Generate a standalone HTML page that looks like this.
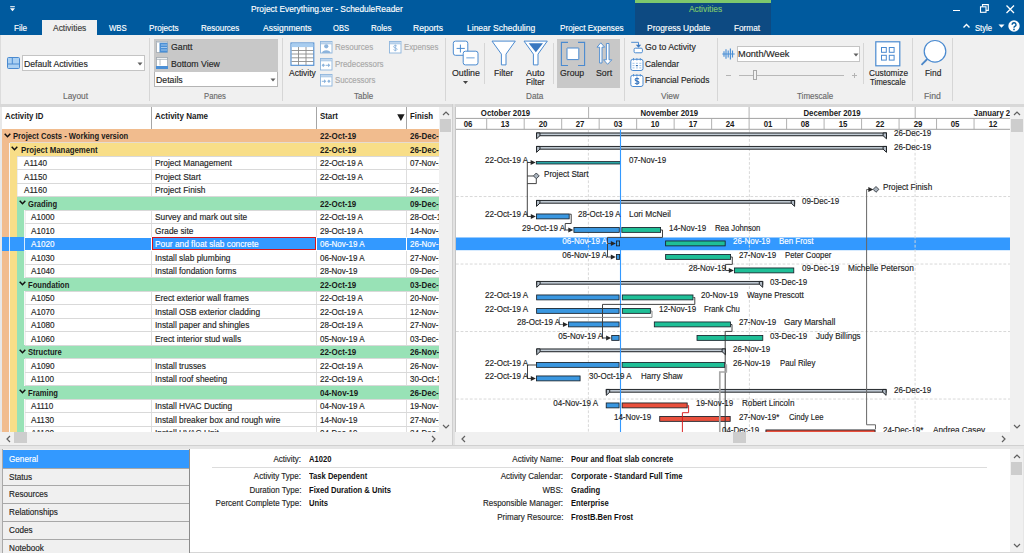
<!DOCTYPE html>
<html><head><meta charset="utf-8"><title>ScheduleReader</title>
<style>
html,body{margin:0;padding:0}
body{width:1024px;height:553px;position:relative;overflow:hidden;background:#f0f0f0;font-family:"Liberation Sans", sans-serif}
.r{position:absolute}
.t{position:absolute;white-space:nowrap;-webkit-text-stroke:0.15px currentColor}
svg.r{overflow:visible}
.t[style*="font-weight:bold"]{-webkit-text-stroke:0}
</style></head><body>
<div class="r" style="left:0.00px;top:0.00px;width:1024.00px;height:35.00px;background:#005a9e;"></div><div class="r" style="left:635.00px;top:0.00px;width:136.00px;height:35.00px;background:#0d4a82;"></div><div class="r" style="left:635.00px;top:0.00px;width:136.00px;height:3.00px;background:#7ec86c;"></div><div class="t" style="left:688.50px;top:5.38px;font-size:9px;line-height:9px;font-weight:normal;color:#7ec86c;transform:scaleX(0.9322);transform-origin:0 0;">Activities</div><div class="t" style="left:251.25px;top:4.98px;font-size:9px;line-height:9px;font-weight:normal;color:#ffffff;transform:scaleX(0.9305);transform-origin:0 0;">Project Everything.xer - ScheduleReader</div><svg class="r" style="left:10.00px;top:5.50px" width="5" height="6" viewBox="0 0 5 6"><rect x="0.2" y="0.2" width="4.6" height="1" fill="#fff"/><path d="M0 2.2h5l-2.5 3z" fill="#fff"/></svg><div class="r" style="left:952.50px;top:10.20px;width:7.50px;height:1.30px;background:#fff;"></div><svg class="r" style="left:979.00px;top:3.00px" width="11" height="11" viewBox="0 0 11 11"><rect x="1.5" y="3.8" width="5.5" height="5.5" fill="none" stroke="#fff" stroke-width="1.1"/><path d="M3.5 3.8V1.6h5.8v5.8H7" fill="none" stroke="#fff" stroke-width="1.1"/></svg><svg class="r" style="left:1005.00px;top:4.00px" width="11" height="11" viewBox="0 0 11 11"><path d="M1.5 1.5l7.5 7.5M9 1.5l-7.5 7.5" stroke="#fff" stroke-width="1.3"/></svg><div class="r" style="left:42.00px;top:20.00px;width:55.00px;height:15.30px;background:#f0f0f0;"></div><div class="t" style="left:13.75px;top:23.98px;font-size:9px;line-height:9px;font-weight:normal;color:#ffffff;transform:scaleX(0.9068);transform-origin:0 0;">File</div><div class="t" style="left:53.40px;top:23.98px;font-size:9px;line-height:9px;font-weight:normal;color:#3a3a3a;transform:scaleX(0.9378);transform-origin:0 0;">Activities</div><div class="t" style="left:108.90px;top:23.98px;font-size:9px;line-height:9px;font-weight:normal;color:#ffffff;transform:scaleX(0.8634);transform-origin:0 0;">WBS</div><div class="t" style="left:148.75px;top:23.98px;font-size:9px;line-height:9px;font-weight:normal;color:#ffffff;transform:scaleX(0.9074);transform-origin:0 0;">Projects</div><div class="t" style="left:201.25px;top:23.98px;font-size:9px;line-height:9px;font-weight:normal;color:#ffffff;transform:scaleX(0.8892);transform-origin:0 0;">Resources</div><div class="t" style="left:262.50px;top:23.98px;font-size:9px;line-height:9px;font-weight:normal;color:#ffffff;transform:scaleX(0.9414);transform-origin:0 0;">Assignments</div><div class="t" style="left:333.00px;top:23.98px;font-size:9px;line-height:9px;font-weight:normal;color:#ffffff;transform:scaleX(0.8418);transform-origin:0 0;">OBS</div><div class="t" style="left:370.50px;top:23.98px;font-size:9px;line-height:9px;font-weight:normal;color:#ffffff;transform:scaleX(0.8909);transform-origin:0 0;">Roles</div><div class="t" style="left:413.00px;top:23.98px;font-size:9px;line-height:9px;font-weight:normal;color:#ffffff;transform:scaleX(0.9520);transform-origin:0 0;">Reports</div><div class="t" style="left:466.70px;top:23.98px;font-size:9px;line-height:9px;font-weight:normal;color:#ffffff;transform:scaleX(0.9465);transform-origin:0 0;">Linear Scheduling</div><div class="t" style="left:559.50px;top:23.98px;font-size:9px;line-height:9px;font-weight:normal;color:#ffffff;transform:scaleX(0.9067);transform-origin:0 0;">Project Expenses</div><div class="t" style="left:647.20px;top:23.98px;font-size:9px;line-height:9px;font-weight:normal;color:#ffffff;transform:scaleX(0.9373);transform-origin:0 0;">Progress Update</div><div class="t" style="left:733.90px;top:23.98px;font-size:9px;line-height:9px;font-weight:normal;color:#ffffff;transform:scaleX(0.9157);transform-origin:0 0;">Format</div><svg class="r" style="left:962.00px;top:22.00px" width="9" height="8" viewBox="0 0 9 8"><path d="M1.5 5.5l3-3 3 3" fill="none" stroke="#fff" stroke-width="1.4"/></svg><div class="t" style="left:974.70px;top:23.68px;font-size:9px;line-height:9px;font-weight:normal;color:#fff;transform:scaleX(0.8496);transform-origin:0 0;">Style</div><svg class="r" style="left:998.00px;top:23.50px" width="7" height="5" viewBox="0 0 7 5"><path d="M0.5 0.5h6l-3 3.2z" fill="#fff"/></svg><svg class="r" style="left:1008.00px;top:20.30px" width="12" height="12" viewBox="0 0 12 12"><circle cx="6" cy="6" r="5.7" fill="#fff"/><path d="M4.1 4.7a1.95 1.95 0 1 1 2.7 1.75c-.6.3-.8.6-.8 1.3" fill="none" stroke="#005a9e" stroke-width="1.4"/><circle cx="6" cy="9.4" r=".85" fill="#005a9e"/></svg><div class="r" style="left:0.00px;top:35.00px;width:1024.00px;height:69.00px;background:#f0f0f0;"></div><div class="r" style="left:0.00px;top:35.00px;width:1.00px;height:69.00px;background:#dcdcdc;"></div><div class="r" style="left:148.60px;top:37.50px;width:0.90px;height:63.50px;background:#d6d6d6;"></div><div class="r" style="left:281.50px;top:37.50px;width:0.90px;height:63.50px;background:#d6d6d6;"></div><div class="r" style="left:444.80px;top:37.50px;width:0.90px;height:63.50px;background:#d6d6d6;"></div><div class="r" style="left:623.50px;top:37.50px;width:0.90px;height:63.50px;background:#d6d6d6;"></div><div class="r" style="left:716.50px;top:37.50px;width:0.90px;height:63.50px;background:#d6d6d6;"></div><div class="r" style="left:912.40px;top:37.50px;width:0.90px;height:63.50px;background:#d6d6d6;"></div><div class="r" style="left:951.60px;top:37.50px;width:0.90px;height:63.50px;background:#d6d6d6;"></div><div class="r" style="left:483.60px;top:43.00px;width:0.90px;height:41.00px;background:#d6d6d6;"></div><div class="r" style="left:552.60px;top:43.00px;width:0.90px;height:41.00px;background:#d6d6d6;"></div><div class="r" style="left:862.50px;top:43.00px;width:0.90px;height:41.00px;background:#d6d6d6;"></div><div class="t" style="left:62.50px;top:91.58px;font-size:9px;line-height:9px;font-weight:normal;color:#6a6a6a;transform:scaleX(0.9252);transform-origin:0 0;">Layout</div><div class="t" style="left:204.20px;top:91.58px;font-size:9px;line-height:9px;font-weight:normal;color:#6a6a6a;transform:scaleX(0.8543);transform-origin:0 0;">Panes</div><div class="t" style="left:353.90px;top:91.58px;font-size:9px;line-height:9px;font-weight:normal;color:#6a6a6a;transform:scaleX(0.8877);transform-origin:0 0;">Table</div><div class="t" style="left:525.70px;top:91.58px;font-size:9px;line-height:9px;font-weight:normal;color:#6a6a6a;transform:scaleX(0.9100);transform-origin:0 0;">Data</div><div class="t" style="left:661.00px;top:91.58px;font-size:9px;line-height:9px;font-weight:normal;color:#6a6a6a;transform:scaleX(0.9305);transform-origin:0 0;">View</div><div class="t" style="left:796.60px;top:91.58px;font-size:9px;line-height:9px;font-weight:normal;color:#6a6a6a;transform:scaleX(0.8900);transform-origin:0 0;">Timescale</div><div class="t" style="left:924.30px;top:91.58px;font-size:9px;line-height:9px;font-weight:normal;color:#6a6a6a;transform:scaleX(0.9653);transform-origin:0 0;">Find</div><svg class="r" style="left:7.00px;top:57.00px" width="13" height="12" viewBox="0 0 13 12"><rect x="0.5" y="0.5" width="12" height="11" rx="1" fill="#abd0f2" stroke="#4a8ad0"/><path d="M5.3 0.5v6.5M0.5 7h12" stroke="#4a8ad0"/></svg><div class="r" style="left:22.20px;top:55.30px;width:123.30px;height:15.50px;background:#fff;box-sizing:border-box;border:1px solid #c4c4c4"></div><div class="t" style="left:23.75px;top:60.18px;font-size:9px;line-height:9px;font-weight:normal;color:#262626;transform:scaleX(0.9655);transform-origin:0 0;">Default Activities</div><svg class="r" style="left:137.00px;top:62.00px" width="6" height="4" viewBox="0 0 6 4"><path d="M0.5 0.5h5l-2.5 3z" fill="#606060"/></svg><div class="r" style="left:154.20px;top:39.00px;width:123.90px;height:33.20px;background:#c8c8c8;"></div><div class="r" style="left:154.20px;top:72.20px;width:123.90px;height:15.30px;background:#fff;box-sizing:border-box;border:1px solid #b4b4b4;border-top:none"></div><svg class="r" style="left:156.00px;top:41.00px" width="12" height="12" viewBox="0 0 12 12"><rect x="0.5" y="0.5" width="11" height="11" fill="#fff" stroke="#a0a8b0" stroke-width="0.8"/><rect x="3.5" y="1.5" width="8" height="10" fill="#4a8fd6"/><path d="M5 4h6M5 6.5h6M5 9h6" stroke="#b8d6f4" stroke-width="0.8"/><rect x="0.5" y="0.5" width="11" height="1.2" fill="#c0cad4"/></svg><div class="t" style="left:170.50px;top:43.08px;font-size:9px;line-height:9px;font-weight:normal;color:#262626;transform:scaleX(0.9767);transform-origin:0 0;">Gantt</div><svg class="r" style="left:156.00px;top:57.40px" width="12" height="12" viewBox="0 0 12 12"><rect x="0.5" y="0.5" width="11" height="11" fill="#fff" stroke="#a0a8b0" stroke-width="0.8"/><path d="M0.5 2.3h11M4 2.3v6" stroke="#a0a8b0" stroke-width="0.8"/><rect x="0" y="9" width="12" height="3" fill="#4a8fd6"/></svg><div class="t" style="left:170.50px;top:59.78px;font-size:9px;line-height:9px;font-weight:normal;color:#262626;transform:scaleX(0.9691);transform-origin:0 0;">Bottom View</div><div class="t" style="left:156.30px;top:76.08px;font-size:9px;line-height:9px;font-weight:normal;color:#262626;transform:scaleX(0.9706);transform-origin:0 0;">Details</div><svg class="r" style="left:270.00px;top:78.00px" width="6" height="4" viewBox="0 0 6 4"><path d="M0.5 0.5h5l-2.5 3z" fill="#606060"/></svg><svg class="r" style="left:289.50px;top:41.50px" width="25" height="24" viewBox="0 0 25 24"><rect x="1" y="1" width="22.8" height="22.3" fill="#fff" stroke="#4a8ad0" stroke-width="1.1"/><rect x="1.5" y="1.5" width="21.8" height="3.6" fill="#a8cdf0"/><path d="M1.5 8.5h22M1.5 12h22M1.5 15.8h22M1.5 19.5h22M8.5 5v18M16 5v18" stroke="#8c8c8c" stroke-width="0.9"/></svg><div class="t" style="left:288.60px;top:68.68px;font-size:9px;line-height:9px;font-weight:normal;color:#262626;transform:scaleX(0.9403);transform-origin:0 0;">Activity</div><svg class="r" style="left:319.70px;top:41.00px" width="13" height="13" viewBox="0 0 13 13"><rect x="0.5" y="0.5" width="11.5" height="11.5" fill="#fff" stroke="#8db4dc" stroke-width="0.9"/><rect x="1" y="1" width="10.5" height="1.8" fill="#c0d6ee"/><path d="M0.5 2.9h11.5" stroke="#8db4dc" stroke-width="0.6"/><circle cx="6.25" cy="5.3" r="2.1" fill="#8db4dc"/><path d="M2 12c0-3.6 8.5-3.6 8.5 0z" fill="#8db4dc"/></svg><div class="t" style="left:334.80px;top:43.48px;font-size:9px;line-height:9px;font-weight:normal;color:#a8a8a8;transform:scaleX(0.8880);transform-origin:0 0;">Resources</div><svg class="r" style="left:319.70px;top:57.50px" width="13" height="13" viewBox="0 0 13 13"><rect x="0.5" y="0.5" width="11.5" height="11.5" fill="#fff" stroke="#8db4dc" stroke-width="0.9"/><rect x="1" y="1" width="10.5" height="1.8" fill="#c0d6ee"/><path d="M0.5 2.9h11.5" stroke="#8db4dc" stroke-width="0.6"/><path d="M3.3 5.6l1.7 1.7-1.7 1.7-1.7-1.7z" fill="#8db4dc"/><path d="M5.6 7.3h3" stroke="#8db4dc" stroke-width="1"/><path d="M8 5.3l2.4 2-2.4 2z" fill="#8db4dc"/></svg><div class="t" style="left:334.80px;top:59.88px;font-size:9px;line-height:9px;font-weight:normal;color:#a8a8a8;transform:scaleX(0.8814);transform-origin:0 0;">Predecessors</div><svg class="r" style="left:319.70px;top:73.70px" width="13" height="13" viewBox="0 0 13 13"><rect x="0.5" y="0.5" width="11.5" height="11.5" fill="#fff" stroke="#8db4dc" stroke-width="0.9"/><rect x="1" y="1" width="10.5" height="1.8" fill="#c0d6ee"/><path d="M0.5 2.9h11.5" stroke="#8db4dc" stroke-width="0.6"/><path d="M1.8 7.3h2.6" stroke="#8db4dc" stroke-width="1"/><path d="M4 5.3l2.4 2-2.4 2z" fill="#8db4dc"/><path d="M8.9 5.6l1.7 1.7-1.7 1.7-1.7-1.7z" fill="#8db4dc"/></svg><div class="t" style="left:334.80px;top:76.18px;font-size:9px;line-height:9px;font-weight:normal;color:#a8a8a8;transform:scaleX(0.8664);transform-origin:0 0;">Successors</div><svg class="r" style="left:388.50px;top:41.00px" width="13" height="13" viewBox="0 0 13 13"><rect x="0.5" y="0.5" width="11.5" height="11.5" fill="#fff" stroke="#8db4dc" stroke-width="0.9"/><rect x="1" y="1" width="10.5" height="1.8" fill="#c0d6ee"/><path d="M0.5 2.9h11.5" stroke="#8db4dc" stroke-width="0.6"/><path d="M8 5.3c-.3-.5-.9-.8-1.7-.8-1 0-1.7.5-1.7 1.2 0 1.6 3.5.9 3.5 2.5 0 .7-.7 1.2-1.8 1.2-.8 0-1.4-.3-1.8-.8M6.3 3.5v6.8" fill="none" stroke="#8db4dc" stroke-width="0.9"/></svg><div class="t" style="left:403.70px;top:43.48px;font-size:9px;line-height:9px;font-weight:normal;color:#a8a8a8;transform:scaleX(0.8678);transform-origin:0 0;">Expenses</div><svg class="r" style="left:452.00px;top:40.00px" width="28" height="26" viewBox="0 0 28 26"><rect x="1.3" y="1.1" width="14.5" height="14.2" rx="2.2" fill="#fff" stroke="#4a8ad0" stroke-width="1"/><path d="M4.6 8.4h8.2M8.4 4.6v7.9" stroke="#4a8ad0" stroke-width="1"/><rect x="11.2" y="11.2" width="14.8" height="13.7" rx="2.2" fill="#fff" stroke="#4a8ad0" stroke-width="1"/><path d="M14.3 17.8h8.3" stroke="#9cc0e6" stroke-width="1.5"/></svg><div class="t" style="left:452.00px;top:68.93px;font-size:9px;line-height:9px;font-weight:normal;color:#262626;transform:scaleX(0.9784);transform-origin:0 0;">Outline</div><svg class="r" style="left:462.50px;top:80.50px" width="5" height="3" viewBox="0 0 5 3"><path d="M0 0h5l-2.5 3z" fill="#444"/></svg><svg class="r" style="left:491.00px;top:40.00px" width="26" height="26" viewBox="0 0 26 26"><path d="M1 1.1h23.3l-9.3 13v10.8h-4.6V14.1z" fill="#fff" stroke="#4a8ad0" stroke-width="1" stroke-linejoin="miter"/></svg><div class="t" style="left:494.20px;top:68.93px;font-size:9px;line-height:9px;font-weight:normal;color:#262626;transform:scaleX(0.9550);transform-origin:0 0;">Filter</div><svg class="r" style="left:522.50px;top:40.00px" width="26" height="26" viewBox="0 0 26 26"><path d="M1 1.1h23.3l-9.3 13v10.8h-4.6V14.1z" fill="#fff" stroke="#4a8ad0" stroke-width="1"/><path d="M5.7 3.3h14.3l-7.15 9z" fill="#3a78c0"/></svg><div class="t" style="left:525.70px;top:68.93px;font-size:9px;line-height:9px;font-weight:normal;color:#262626;transform:scaleX(1.0046);transform-origin:0 0;">Auto</div><div class="t" style="left:525.70px;top:78.38px;font-size:9px;line-height:9px;font-weight:normal;color:#262626;transform:scaleX(0.9300);transform-origin:0 0;">Filter</div><div class="r" style="left:557.00px;top:38.90px;width:63.00px;height:48.90px;background:#c8c8c8;"></div><svg class="r" style="left:560.00px;top:40.50px" width="26" height="26" viewBox="0 0 26 26"><path d="M8 1.4H1.4v23.1H8M18 1.4h6.6v23.1H18" fill="none" stroke="#4a8ad0" stroke-width="1.1"/><rect x="7" y="7" width="11.8" height="11.6" rx="0.3" fill="#fff" stroke="#4a8ad0" stroke-width="1"/></svg><div class="t" style="left:560.20px;top:68.93px;font-size:9px;line-height:9px;font-weight:normal;color:#262626;transform:scaleX(0.9675);transform-origin:0 0;">Group</div><svg class="r" style="left:596.00px;top:41.50px" width="17" height="24" viewBox="0 0 17 24"><path d="M4.8 0.8L1 5.2h2.6v15.8h2.4V5.2h2.6z" fill="#fff" stroke="#4a8ad0" stroke-width="0.9"/><path d="M11.6 22.3l4.2-4.5h-2.8V1.5h-2.6v16.3H7.6z" fill="#fff" stroke="#4a8ad0" stroke-width="0.9"/></svg><div class="t" style="left:595.50px;top:68.93px;font-size:9px;line-height:9px;font-weight:normal;color:#262626;transform:scaleX(0.9754);transform-origin:0 0;">Sort</div><svg class="r" style="left:630.00px;top:41.00px" width="14" height="13" viewBox="0 0 14 13"><path d="M1.2 1.3h7.3v3.5" fill="none" stroke="#4a8ad0" stroke-width="1"/><path d="M5.8 3.8h5.4l-2.7 2.9z" fill="#3a78c0"/><rect x="4.1" y="7.2" width="8.3" height="4.6" rx="1.2" fill="#fff" stroke="#4a8ad0" stroke-width="1"/></svg><div class="t" style="left:645.00px;top:43.08px;font-size:9px;line-height:9px;font-weight:normal;color:#262626;transform:scaleX(0.9673);transform-origin:0 0;">Go to Activity</div><svg class="r" style="left:629.70px;top:57.50px" width="14" height="13" viewBox="0 0 14 13"><rect x="0.8" y="1.3" width="12.2" height="11.2" rx="2" fill="#fff" stroke="#4a8ad0" stroke-width="1"/><path d="M3.5 0v2.5M6.9 0v2.5M10.3 0v2.5" stroke="#4a8ad0" stroke-width="0.8"/><path d="M2.5 5.3h2M5.9 5.3h2M9.3 5.3h2M2.5 7.6h2M9.3 7.6h2M2.5 9.9h2M5.9 9.9h2M9.3 9.9h2" stroke="#9cc4ea" stroke-width="1"/><rect x="5.9" y="7.1" width="2" height="1.1" fill="#1f5ea8"/></svg><div class="t" style="left:645.00px;top:59.98px;font-size:9px;line-height:9px;font-weight:normal;color:#262626;transform:scaleX(0.9309);transform-origin:0 0;">Calendar</div><svg class="r" style="left:629.70px;top:74.00px" width="14" height="13" viewBox="0 0 14 13"><rect x="0.8" y="1.3" width="12.2" height="11.2" rx="2" fill="#fff" stroke="#4a8ad0" stroke-width="1"/><path d="M3.5 0v2.5M6.9 0v2.5M10.3 0v2.5" stroke="#4a8ad0" stroke-width="0.8"/><path d="M8.9 5.2c-.3-.6-1-.9-1.9-.9-1.1 0-1.9.6-1.9 1.4 0 1.8 3.9 1 3.9 2.8 0 .8-.8 1.4-2 1.4-.9 0-1.6-.3-2-.9M7 3.3v7.6" fill="none" stroke="#3a78c0" stroke-width="1.1"/></svg><div class="t" style="left:645.00px;top:76.38px;font-size:9px;line-height:9px;font-weight:normal;color:#262626;transform:scaleX(0.9329);transform-origin:0 0;">Financial Periods</div><svg class="r" style="left:722.00px;top:47.50px" width="13" height="12" viewBox="0 0 13 12"><path d="M0.3 6h12.4M2 3.2v5.6M4 1.2v9.6M6.2 2.4v7.2M8.4 0.4v11.2M10.5 2.6v6.8" stroke="#4a8fd6" stroke-width="1.15"/></svg><div class="r" style="left:737.20px;top:46.00px;width:123.20px;height:15.80px;background:#fff;box-sizing:border-box;border:1px solid #c4c4c4"></div><div class="t" style="left:738.40px;top:50.18px;font-size:9px;line-height:9px;font-weight:normal;color:#262626;transform:scaleX(1.0207);transform-origin:0 0;">Month/Week</div><svg class="r" style="left:852.50px;top:52.50px" width="6" height="4" viewBox="0 0 6 4"><path d="M0.5 0.5h5l-2.5 3z" fill="#606060"/></svg><div class="r" style="left:725.50px;top:75.10px;width:5.50px;height:0.90px;background:#b4b4b4;"></div><div class="r" style="left:738.70px;top:75.00px;width:105.30px;height:0.90px;background:#b8b8b8;"></div><div class="r" style="left:752.50px;top:70.20px;width:4.20px;height:9.40px;background:#f2f2f2;box-sizing:border-box;border:1px solid #a8a8a8"></div><div class="r" style="left:851.60px;top:75.30px;width:5.20px;height:0.90px;background:#b4b4b4;"></div><div class="r" style="left:853.75px;top:73.15px;width:0.90px;height:5.20px;background:#b4b4b4;"></div><svg class="r" style="left:874.50px;top:40.50px" width="26" height="26" viewBox="0 0 26 26"><rect x="0.8" y="0.8" width="24" height="24" fill="#fff" stroke="#4a8ad0" stroke-width="1.2"/><rect x="6.5" y="6.5" width="4.8" height="4.8" fill="none" stroke="#4a8ad0" stroke-width="1"/><rect x="14.3" y="6.5" width="4.8" height="4.8" fill="none" stroke="#4a8ad0" stroke-width="1"/><rect x="6.5" y="14.3" width="4.8" height="4.8" fill="none" stroke="#4a8ad0" stroke-width="1"/><rect x="14.3" y="14.3" width="4.8" height="4.8" fill="none" stroke="#4a8ad0" stroke-width="1"/></svg><div class="t" style="left:868.50px;top:68.88px;font-size:9px;line-height:9px;font-weight:normal;color:#262626;transform:scaleX(0.9197);transform-origin:0 0;">Customize</div><div class="t" style="left:870.00px;top:78.38px;font-size:9px;line-height:9px;font-weight:normal;color:#262626;transform:scaleX(0.8752);transform-origin:0 0;">Timescale</div><svg class="r" style="left:919.50px;top:38.50px" width="28" height="28" viewBox="0 0 28 28"><circle cx="15" cy="12.3" r="10.8" fill="#fff" stroke="#4a8ad0" stroke-width="1.2"/><path d="M7.3 20L1.5 25.8" stroke="#4a86c8" stroke-width="1.8"/></svg><div class="t" style="left:924.90px;top:68.88px;font-size:9px;line-height:9px;font-weight:normal;color:#262626;transform:scaleX(0.9310);transform-origin:0 0;">Find</div><div class="r" style="left:0.00px;top:103.60px;width:1024.00px;height:3.20px;background:#d8d8d8;"></div><div class="r" style="left:0px;top:106.8px;width:439px;height:325.2px;background:#fff;overflow:hidden"><div class="r" style="left:0.00px;top:0.00px;width:2.20px;height:326.00px;background:#e8e8e8;"></div><div class="r" style="left:2.20px;top:0.00px;width:437.00px;height:22.20px;background:#fff;"></div><div class="r" style="left:2.20px;top:21.90px;width:437.00px;height:1.00px;background:#8e8e8e;"></div><div class="r" style="left:151.10px;top:0.00px;width:0.90px;height:22.00px;background:#a6a6a6;"></div><div class="r" style="left:316.20px;top:0.00px;width:0.90px;height:22.00px;background:#a6a6a6;"></div><div class="r" style="left:406.20px;top:0.00px;width:0.90px;height:22.00px;background:#a6a6a6;"></div><div class="t" style="left:5.30px;top:5.28px;font-size:9px;line-height:9px;font-weight:bold;color:#1a1a1a;transform:scaleX(0.8725);transform-origin:0 0;">Activity ID</div><div class="t" style="left:155.30px;top:5.28px;font-size:9px;line-height:9px;font-weight:bold;color:#1a1a1a;transform:scaleX(0.8904);transform-origin:0 0;">Activity Name</div><div class="t" style="left:320.30px;top:5.28px;font-size:9px;line-height:9px;font-weight:bold;color:#1a1a1a;transform:scaleX(0.8700);transform-origin:0 0;">Start</div><div class="t" style="left:410.20px;top:5.28px;font-size:9px;line-height:9px;font-weight:bold;color:#1a1a1a;transform:scaleX(0.8700);transform-origin:0 0;">Finish</div><svg class="r" style="left:396.80px;top:6.80px" width="8" height="7" viewBox="0 0 8 7"><path d="M0.2 0.3h7.4l-3.7 6.6z" fill="#1a1a1a"/></svg><div class="r" style="left:2.20px;top:22.50px;width:436.80px;height:13.50px;background:#f1bc8e;"></div><svg class="r" style="left:3.60px;top:25.90px" width="7" height="5" viewBox="0 0 7 5"><path d="M0.7 0.8l2.8 2.9 2.8-2.9" fill="none" stroke="#111" stroke-width="1.5"/></svg><div class="t" style="left:13.40px;top:25.28px;font-size:9px;line-height:9px;font-weight:bold;color:#1a1a1a;transform:scaleX(0.8450);transform-origin:0 0;">Project Costs - Working version</div><div class="t" style="left:320.30px;top:25.28px;font-size:9px;line-height:9px;font-weight:bold;color:#1a1a1a;transform:scaleX(0.8850);transform-origin:0 0;">22-Oct-19</div><div class="t" style="left:410.30px;top:25.28px;font-size:9px;line-height:9px;font-weight:bold;color:#1a1a1a;transform:scaleX(0.8850);transform-origin:0 0;">26-Dec-19</div><div class="r" style="left:2.20px;top:36.00px;width:6.90px;height:13.50px;background:#f1bc8e;"></div><div class="r" style="left:9.05px;top:36.00px;width:0.60px;height:13.50px;background:#f6f6f6;"></div><div class="r" style="left:9.65px;top:36.00px;width:429.35px;height:13.50px;background:#f8de88;"></div><svg class="r" style="left:11.05px;top:39.40px" width="7" height="5" viewBox="0 0 7 5"><path d="M0.7 0.8l2.8 2.9 2.8-2.9" fill="none" stroke="#111" stroke-width="1.5"/></svg><div class="t" style="left:20.75px;top:38.78px;font-size:9px;line-height:9px;font-weight:bold;color:#1a1a1a;transform:scaleX(0.8700);transform-origin:0 0;">Project Management</div><div class="t" style="left:320.30px;top:38.78px;font-size:9px;line-height:9px;font-weight:bold;color:#1a1a1a;transform:scaleX(0.8850);transform-origin:0 0;">22-Oct-19</div><div class="t" style="left:410.30px;top:38.78px;font-size:9px;line-height:9px;font-weight:bold;color:#1a1a1a;transform:scaleX(0.8850);transform-origin:0 0;">26-Dec-19</div><div class="r" style="left:2.20px;top:49.50px;width:6.90px;height:13.50px;background:#f1bc8e;"></div><div class="r" style="left:9.05px;top:49.50px;width:0.60px;height:13.50px;background:#f6f6f6;"></div><div class="r" style="left:9.65px;top:49.50px;width:6.90px;height:13.50px;background:#f8de88;"></div><div class="r" style="left:16.50px;top:49.50px;width:0.60px;height:13.50px;background:#f6f6f6;"></div><div class="r" style="left:17.10px;top:49.50px;width:421.90px;height:13.50px;background:#fff;"></div><div class="r" style="left:17.10px;top:49.50px;width:0.60px;height:13.50px;background:#eeeeee;"></div><div class="r" style="left:151.10px;top:49.50px;width:0.90px;height:13.50px;background:#dedede;"></div><div class="r" style="left:316.20px;top:49.50px;width:0.90px;height:13.50px;background:#dedede;"></div><div class="r" style="left:406.20px;top:49.50px;width:0.90px;height:13.50px;background:#dedede;"></div><div class="t" style="left:24.20px;top:52.28px;font-size:9px;line-height:9px;font-weight:normal;color:#1e1e1e;transform:scaleX(0.9050);transform-origin:0 0;">A1140</div><div class="t" style="left:155.20px;top:52.28px;font-size:9px;line-height:9px;font-weight:normal;color:#1e1e1e;transform:scaleX(0.9250);transform-origin:0 0;">Project Management</div><div class="t" style="left:320.30px;top:52.28px;font-size:9px;line-height:9px;font-weight:normal;color:#1e1e1e;transform:scaleX(0.8900);transform-origin:0 0;">22-Oct-19 A</div><div class="t" style="left:410.30px;top:52.28px;font-size:9px;line-height:9px;font-weight:normal;color:#1e1e1e;transform:scaleX(0.8900);transform-origin:0 0;">07-Nov-19</div><div class="r" style="left:2.20px;top:63.00px;width:6.90px;height:13.50px;background:#f1bc8e;"></div><div class="r" style="left:9.05px;top:63.00px;width:0.60px;height:13.50px;background:#f6f6f6;"></div><div class="r" style="left:9.65px;top:63.00px;width:6.90px;height:13.50px;background:#f8de88;"></div><div class="r" style="left:16.50px;top:63.00px;width:0.60px;height:13.50px;background:#f6f6f6;"></div><div class="r" style="left:17.10px;top:63.00px;width:421.90px;height:13.50px;background:#fff;"></div><div class="r" style="left:17.10px;top:63.00px;width:0.60px;height:13.50px;background:#eeeeee;"></div><div class="r" style="left:151.10px;top:63.00px;width:0.90px;height:13.50px;background:#dedede;"></div><div class="r" style="left:316.20px;top:63.00px;width:0.90px;height:13.50px;background:#dedede;"></div><div class="r" style="left:406.20px;top:63.00px;width:0.90px;height:13.50px;background:#dedede;"></div><div class="t" style="left:24.20px;top:65.78px;font-size:9px;line-height:9px;font-weight:normal;color:#1e1e1e;transform:scaleX(0.9050);transform-origin:0 0;">A1150</div><div class="t" style="left:155.20px;top:65.78px;font-size:9px;line-height:9px;font-weight:normal;color:#1e1e1e;transform:scaleX(0.9250);transform-origin:0 0;">Project Start</div><div class="t" style="left:320.30px;top:65.78px;font-size:9px;line-height:9px;font-weight:normal;color:#1e1e1e;transform:scaleX(0.8900);transform-origin:0 0;">22-Oct-19 A</div><div class="t" style="left:410.30px;top:65.78px;font-size:9px;line-height:9px;font-weight:normal;color:#1e1e1e;transform:scaleX(0.8900);transform-origin:0 0;"></div><div class="r" style="left:2.20px;top:76.50px;width:6.90px;height:13.50px;background:#f1bc8e;"></div><div class="r" style="left:9.05px;top:76.50px;width:0.60px;height:13.50px;background:#f6f6f6;"></div><div class="r" style="left:9.65px;top:76.50px;width:6.90px;height:13.50px;background:#f8de88;"></div><div class="r" style="left:16.50px;top:76.50px;width:0.60px;height:13.50px;background:#f6f6f6;"></div><div class="r" style="left:17.10px;top:76.50px;width:421.90px;height:13.50px;background:#fff;"></div><div class="r" style="left:17.10px;top:76.50px;width:0.60px;height:13.50px;background:#eeeeee;"></div><div class="r" style="left:151.10px;top:76.50px;width:0.90px;height:13.50px;background:#dedede;"></div><div class="r" style="left:316.20px;top:76.50px;width:0.90px;height:13.50px;background:#dedede;"></div><div class="r" style="left:406.20px;top:76.50px;width:0.90px;height:13.50px;background:#dedede;"></div><div class="t" style="left:24.20px;top:79.28px;font-size:9px;line-height:9px;font-weight:normal;color:#1e1e1e;transform:scaleX(0.9050);transform-origin:0 0;">A1160</div><div class="t" style="left:155.20px;top:79.28px;font-size:9px;line-height:9px;font-weight:normal;color:#1e1e1e;transform:scaleX(0.9250);transform-origin:0 0;">Project Finish</div><div class="t" style="left:320.30px;top:79.28px;font-size:9px;line-height:9px;font-weight:normal;color:#1e1e1e;transform:scaleX(0.8900);transform-origin:0 0;"></div><div class="t" style="left:410.30px;top:79.28px;font-size:9px;line-height:9px;font-weight:normal;color:#1e1e1e;transform:scaleX(0.8900);transform-origin:0 0;">24-Dec-19</div><div class="r" style="left:2.20px;top:90.00px;width:6.90px;height:13.50px;background:#f1bc8e;"></div><div class="r" style="left:9.05px;top:90.00px;width:0.60px;height:13.50px;background:#f6f6f6;"></div><div class="r" style="left:9.65px;top:90.00px;width:6.90px;height:13.50px;background:#f8de88;"></div><div class="r" style="left:16.50px;top:90.00px;width:0.60px;height:13.50px;background:#f6f6f6;"></div><div class="r" style="left:17.10px;top:90.00px;width:421.90px;height:13.50px;background:#98e2b6;"></div><svg class="r" style="left:18.50px;top:93.40px" width="7" height="5" viewBox="0 0 7 5"><path d="M0.7 0.8l2.8 2.9 2.8-2.9" fill="none" stroke="#111" stroke-width="1.5"/></svg><div class="t" style="left:28.10px;top:92.78px;font-size:9px;line-height:9px;font-weight:bold;color:#1a1a1a;transform:scaleX(0.8450);transform-origin:0 0;">Grading</div><div class="t" style="left:320.30px;top:92.78px;font-size:9px;line-height:9px;font-weight:bold;color:#1a1a1a;transform:scaleX(0.8850);transform-origin:0 0;">22-Oct-19</div><div class="t" style="left:410.30px;top:92.78px;font-size:9px;line-height:9px;font-weight:bold;color:#1a1a1a;transform:scaleX(0.8850);transform-origin:0 0;">09-Dec-19</div><div class="r" style="left:2.20px;top:103.50px;width:6.90px;height:13.50px;background:#f1bc8e;"></div><div class="r" style="left:9.05px;top:103.50px;width:0.60px;height:13.50px;background:#f6f6f6;"></div><div class="r" style="left:9.65px;top:103.50px;width:6.90px;height:13.50px;background:#f8de88;"></div><div class="r" style="left:16.50px;top:103.50px;width:0.60px;height:13.50px;background:#f6f6f6;"></div><div class="r" style="left:17.10px;top:103.50px;width:6.90px;height:13.50px;background:#98e2b6;"></div><div class="r" style="left:23.95px;top:103.50px;width:0.60px;height:13.50px;background:#f6f6f6;"></div><div class="r" style="left:24.55px;top:103.50px;width:414.45px;height:13.50px;background:#fff;"></div><div class="r" style="left:24.55px;top:103.50px;width:0.60px;height:13.50px;background:#eeeeee;"></div><div class="r" style="left:151.10px;top:103.50px;width:0.90px;height:13.50px;background:#dedede;"></div><div class="r" style="left:316.20px;top:103.50px;width:0.90px;height:13.50px;background:#dedede;"></div><div class="r" style="left:406.20px;top:103.50px;width:0.90px;height:13.50px;background:#dedede;"></div><div class="t" style="left:31.40px;top:106.28px;font-size:9px;line-height:9px;font-weight:normal;color:#1e1e1e;transform:scaleX(0.9050);transform-origin:0 0;">A1000</div><div class="t" style="left:155.20px;top:106.28px;font-size:9px;line-height:9px;font-weight:normal;color:#1e1e1e;transform:scaleX(0.9250);transform-origin:0 0;">Survey and mark out site</div><div class="t" style="left:320.30px;top:106.28px;font-size:9px;line-height:9px;font-weight:normal;color:#1e1e1e;transform:scaleX(0.8900);transform-origin:0 0;">22-Oct-19 A</div><div class="t" style="left:410.30px;top:106.28px;font-size:9px;line-height:9px;font-weight:normal;color:#1e1e1e;transform:scaleX(0.8900);transform-origin:0 0;">28-Oct-19 A</div><div class="r" style="left:2.20px;top:117.00px;width:6.90px;height:13.50px;background:#f1bc8e;"></div><div class="r" style="left:9.05px;top:117.00px;width:0.60px;height:13.50px;background:#f6f6f6;"></div><div class="r" style="left:9.65px;top:117.00px;width:6.90px;height:13.50px;background:#f8de88;"></div><div class="r" style="left:16.50px;top:117.00px;width:0.60px;height:13.50px;background:#f6f6f6;"></div><div class="r" style="left:17.10px;top:117.00px;width:6.90px;height:13.50px;background:#98e2b6;"></div><div class="r" style="left:23.95px;top:117.00px;width:0.60px;height:13.50px;background:#f6f6f6;"></div><div class="r" style="left:24.55px;top:117.00px;width:414.45px;height:13.50px;background:#fff;"></div><div class="r" style="left:24.55px;top:117.00px;width:0.60px;height:13.50px;background:#eeeeee;"></div><div class="r" style="left:151.10px;top:117.00px;width:0.90px;height:13.50px;background:#dedede;"></div><div class="r" style="left:316.20px;top:117.00px;width:0.90px;height:13.50px;background:#dedede;"></div><div class="r" style="left:406.20px;top:117.00px;width:0.90px;height:13.50px;background:#dedede;"></div><div class="t" style="left:31.40px;top:119.78px;font-size:9px;line-height:9px;font-weight:normal;color:#1e1e1e;transform:scaleX(0.9050);transform-origin:0 0;">A1010</div><div class="t" style="left:155.20px;top:119.78px;font-size:9px;line-height:9px;font-weight:normal;color:#1e1e1e;transform:scaleX(0.9250);transform-origin:0 0;">Grade site</div><div class="t" style="left:320.30px;top:119.78px;font-size:9px;line-height:9px;font-weight:normal;color:#1e1e1e;transform:scaleX(0.8900);transform-origin:0 0;">29-Oct-19 A</div><div class="t" style="left:410.30px;top:119.78px;font-size:9px;line-height:9px;font-weight:normal;color:#1e1e1e;transform:scaleX(0.8900);transform-origin:0 0;">14-Nov-19</div><div class="r" style="left:2.20px;top:130.50px;width:6.90px;height:13.50px;background:#3399ff;"></div><div class="r" style="left:9.05px;top:130.50px;width:0.60px;height:13.50px;background:#d8ecff;"></div><div class="r" style="left:9.65px;top:130.50px;width:6.90px;height:13.50px;background:#3399ff;"></div><div class="r" style="left:16.50px;top:130.50px;width:0.60px;height:13.50px;background:#d8ecff;"></div><div class="r" style="left:17.10px;top:130.50px;width:6.90px;height:13.50px;background:#3399ff;"></div><div class="r" style="left:23.95px;top:130.50px;width:0.60px;height:13.50px;background:#d8ecff;"></div><div class="r" style="left:24.55px;top:130.50px;width:414.45px;height:13.50px;background:#3399ff;"></div><div class="r" style="left:151.10px;top:130.50px;width:0.90px;height:13.50px;background:#ffffff;"></div><div class="r" style="left:316.20px;top:130.50px;width:0.90px;height:13.50px;background:#ffffff;"></div><div class="r" style="left:406.20px;top:130.50px;width:0.90px;height:13.50px;background:#ffffff;"></div><div class="t" style="left:31.40px;top:133.28px;font-size:9px;line-height:9px;font-weight:normal;color:#ffffff;transform:scaleX(0.9050);transform-origin:0 0;">A1020</div><div class="t" style="left:155.20px;top:133.28px;font-size:9px;line-height:9px;font-weight:normal;color:#ffffff;transform:scaleX(0.9250);transform-origin:0 0;">Pour and float slab concrete</div><div class="t" style="left:320.30px;top:133.28px;font-size:9px;line-height:9px;font-weight:normal;color:#ffffff;transform:scaleX(0.8900);transform-origin:0 0;">06-Nov-19 A</div><div class="t" style="left:410.30px;top:133.28px;font-size:9px;line-height:9px;font-weight:normal;color:#ffffff;transform:scaleX(0.8900);transform-origin:0 0;">26-Nov-19</div><div class="r" style="left:2.20px;top:144.00px;width:6.90px;height:13.50px;background:#f1bc8e;"></div><div class="r" style="left:9.05px;top:144.00px;width:0.60px;height:13.50px;background:#f6f6f6;"></div><div class="r" style="left:9.65px;top:144.00px;width:6.90px;height:13.50px;background:#f8de88;"></div><div class="r" style="left:16.50px;top:144.00px;width:0.60px;height:13.50px;background:#f6f6f6;"></div><div class="r" style="left:17.10px;top:144.00px;width:6.90px;height:13.50px;background:#98e2b6;"></div><div class="r" style="left:23.95px;top:144.00px;width:0.60px;height:13.50px;background:#f6f6f6;"></div><div class="r" style="left:24.55px;top:144.00px;width:414.45px;height:13.50px;background:#fff;"></div><div class="r" style="left:24.55px;top:144.00px;width:0.60px;height:13.50px;background:#eeeeee;"></div><div class="r" style="left:151.10px;top:144.00px;width:0.90px;height:13.50px;background:#dedede;"></div><div class="r" style="left:316.20px;top:144.00px;width:0.90px;height:13.50px;background:#dedede;"></div><div class="r" style="left:406.20px;top:144.00px;width:0.90px;height:13.50px;background:#dedede;"></div><div class="t" style="left:31.40px;top:146.78px;font-size:9px;line-height:9px;font-weight:normal;color:#1e1e1e;transform:scaleX(0.9050);transform-origin:0 0;">A1030</div><div class="t" style="left:155.20px;top:146.78px;font-size:9px;line-height:9px;font-weight:normal;color:#1e1e1e;transform:scaleX(0.9250);transform-origin:0 0;">Install slab plumbing</div><div class="t" style="left:320.30px;top:146.78px;font-size:9px;line-height:9px;font-weight:normal;color:#1e1e1e;transform:scaleX(0.8900);transform-origin:0 0;">06-Nov-19 A</div><div class="t" style="left:410.30px;top:146.78px;font-size:9px;line-height:9px;font-weight:normal;color:#1e1e1e;transform:scaleX(0.8900);transform-origin:0 0;">27-Nov-19</div><div class="r" style="left:2.20px;top:157.50px;width:6.90px;height:13.50px;background:#f1bc8e;"></div><div class="r" style="left:9.05px;top:157.50px;width:0.60px;height:13.50px;background:#f6f6f6;"></div><div class="r" style="left:9.65px;top:157.50px;width:6.90px;height:13.50px;background:#f8de88;"></div><div class="r" style="left:16.50px;top:157.50px;width:0.60px;height:13.50px;background:#f6f6f6;"></div><div class="r" style="left:17.10px;top:157.50px;width:6.90px;height:13.50px;background:#98e2b6;"></div><div class="r" style="left:23.95px;top:157.50px;width:0.60px;height:13.50px;background:#f6f6f6;"></div><div class="r" style="left:24.55px;top:157.50px;width:414.45px;height:13.50px;background:#fff;"></div><div class="r" style="left:24.55px;top:157.50px;width:0.60px;height:13.50px;background:#eeeeee;"></div><div class="r" style="left:151.10px;top:157.50px;width:0.90px;height:13.50px;background:#dedede;"></div><div class="r" style="left:316.20px;top:157.50px;width:0.90px;height:13.50px;background:#dedede;"></div><div class="r" style="left:406.20px;top:157.50px;width:0.90px;height:13.50px;background:#dedede;"></div><div class="t" style="left:31.40px;top:160.28px;font-size:9px;line-height:9px;font-weight:normal;color:#1e1e1e;transform:scaleX(0.9050);transform-origin:0 0;">A1040</div><div class="t" style="left:155.20px;top:160.28px;font-size:9px;line-height:9px;font-weight:normal;color:#1e1e1e;transform:scaleX(0.9250);transform-origin:0 0;">Install fondation forms</div><div class="t" style="left:320.30px;top:160.28px;font-size:9px;line-height:9px;font-weight:normal;color:#1e1e1e;transform:scaleX(0.8900);transform-origin:0 0;">28-Nov-19</div><div class="t" style="left:410.30px;top:160.28px;font-size:9px;line-height:9px;font-weight:normal;color:#1e1e1e;transform:scaleX(0.8900);transform-origin:0 0;">09-Dec-19</div><div class="r" style="left:2.20px;top:171.00px;width:6.90px;height:13.50px;background:#f1bc8e;"></div><div class="r" style="left:9.05px;top:171.00px;width:0.60px;height:13.50px;background:#f6f6f6;"></div><div class="r" style="left:9.65px;top:171.00px;width:6.90px;height:13.50px;background:#f8de88;"></div><div class="r" style="left:16.50px;top:171.00px;width:0.60px;height:13.50px;background:#f6f6f6;"></div><div class="r" style="left:17.10px;top:171.00px;width:421.90px;height:13.50px;background:#98e2b6;"></div><svg class="r" style="left:18.50px;top:174.40px" width="7" height="5" viewBox="0 0 7 5"><path d="M0.7 0.8l2.8 2.9 2.8-2.9" fill="none" stroke="#111" stroke-width="1.5"/></svg><div class="t" style="left:28.10px;top:173.78px;font-size:9px;line-height:9px;font-weight:bold;color:#1a1a1a;transform:scaleX(0.8450);transform-origin:0 0;">Foundation</div><div class="t" style="left:320.30px;top:173.78px;font-size:9px;line-height:9px;font-weight:bold;color:#1a1a1a;transform:scaleX(0.8850);transform-origin:0 0;">22-Oct-19</div><div class="t" style="left:410.30px;top:173.78px;font-size:9px;line-height:9px;font-weight:bold;color:#1a1a1a;transform:scaleX(0.8850);transform-origin:0 0;">03-Dec-19</div><div class="r" style="left:2.20px;top:184.50px;width:6.90px;height:13.50px;background:#f1bc8e;"></div><div class="r" style="left:9.05px;top:184.50px;width:0.60px;height:13.50px;background:#f6f6f6;"></div><div class="r" style="left:9.65px;top:184.50px;width:6.90px;height:13.50px;background:#f8de88;"></div><div class="r" style="left:16.50px;top:184.50px;width:0.60px;height:13.50px;background:#f6f6f6;"></div><div class="r" style="left:17.10px;top:184.50px;width:6.90px;height:13.50px;background:#98e2b6;"></div><div class="r" style="left:23.95px;top:184.50px;width:0.60px;height:13.50px;background:#f6f6f6;"></div><div class="r" style="left:24.55px;top:184.50px;width:414.45px;height:13.50px;background:#fff;"></div><div class="r" style="left:24.55px;top:184.50px;width:0.60px;height:13.50px;background:#eeeeee;"></div><div class="r" style="left:151.10px;top:184.50px;width:0.90px;height:13.50px;background:#dedede;"></div><div class="r" style="left:316.20px;top:184.50px;width:0.90px;height:13.50px;background:#dedede;"></div><div class="r" style="left:406.20px;top:184.50px;width:0.90px;height:13.50px;background:#dedede;"></div><div class="t" style="left:31.40px;top:187.28px;font-size:9px;line-height:9px;font-weight:normal;color:#1e1e1e;transform:scaleX(0.9050);transform-origin:0 0;">A1050</div><div class="t" style="left:155.20px;top:187.28px;font-size:9px;line-height:9px;font-weight:normal;color:#1e1e1e;transform:scaleX(0.9250);transform-origin:0 0;">Erect exterior wall frames</div><div class="t" style="left:320.30px;top:187.28px;font-size:9px;line-height:9px;font-weight:normal;color:#1e1e1e;transform:scaleX(0.8900);transform-origin:0 0;">22-Oct-19 A</div><div class="t" style="left:410.30px;top:187.28px;font-size:9px;line-height:9px;font-weight:normal;color:#1e1e1e;transform:scaleX(0.8900);transform-origin:0 0;">20-Nov-19</div><div class="r" style="left:2.20px;top:198.00px;width:6.90px;height:13.50px;background:#f1bc8e;"></div><div class="r" style="left:9.05px;top:198.00px;width:0.60px;height:13.50px;background:#f6f6f6;"></div><div class="r" style="left:9.65px;top:198.00px;width:6.90px;height:13.50px;background:#f8de88;"></div><div class="r" style="left:16.50px;top:198.00px;width:0.60px;height:13.50px;background:#f6f6f6;"></div><div class="r" style="left:17.10px;top:198.00px;width:6.90px;height:13.50px;background:#98e2b6;"></div><div class="r" style="left:23.95px;top:198.00px;width:0.60px;height:13.50px;background:#f6f6f6;"></div><div class="r" style="left:24.55px;top:198.00px;width:414.45px;height:13.50px;background:#fff;"></div><div class="r" style="left:24.55px;top:198.00px;width:0.60px;height:13.50px;background:#eeeeee;"></div><div class="r" style="left:151.10px;top:198.00px;width:0.90px;height:13.50px;background:#dedede;"></div><div class="r" style="left:316.20px;top:198.00px;width:0.90px;height:13.50px;background:#dedede;"></div><div class="r" style="left:406.20px;top:198.00px;width:0.90px;height:13.50px;background:#dedede;"></div><div class="t" style="left:31.40px;top:200.78px;font-size:9px;line-height:9px;font-weight:normal;color:#1e1e1e;transform:scaleX(0.9050);transform-origin:0 0;">A1070</div><div class="t" style="left:155.20px;top:200.78px;font-size:9px;line-height:9px;font-weight:normal;color:#1e1e1e;transform:scaleX(0.9250);transform-origin:0 0;">Install OSB exterior cladding</div><div class="t" style="left:320.30px;top:200.78px;font-size:9px;line-height:9px;font-weight:normal;color:#1e1e1e;transform:scaleX(0.8900);transform-origin:0 0;">22-Oct-19 A</div><div class="t" style="left:410.30px;top:200.78px;font-size:9px;line-height:9px;font-weight:normal;color:#1e1e1e;transform:scaleX(0.8900);transform-origin:0 0;">12-Nov-19</div><div class="r" style="left:2.20px;top:211.50px;width:6.90px;height:13.50px;background:#f1bc8e;"></div><div class="r" style="left:9.05px;top:211.50px;width:0.60px;height:13.50px;background:#f6f6f6;"></div><div class="r" style="left:9.65px;top:211.50px;width:6.90px;height:13.50px;background:#f8de88;"></div><div class="r" style="left:16.50px;top:211.50px;width:0.60px;height:13.50px;background:#f6f6f6;"></div><div class="r" style="left:17.10px;top:211.50px;width:6.90px;height:13.50px;background:#98e2b6;"></div><div class="r" style="left:23.95px;top:211.50px;width:0.60px;height:13.50px;background:#f6f6f6;"></div><div class="r" style="left:24.55px;top:211.50px;width:414.45px;height:13.50px;background:#fff;"></div><div class="r" style="left:24.55px;top:211.50px;width:0.60px;height:13.50px;background:#eeeeee;"></div><div class="r" style="left:151.10px;top:211.50px;width:0.90px;height:13.50px;background:#dedede;"></div><div class="r" style="left:316.20px;top:211.50px;width:0.90px;height:13.50px;background:#dedede;"></div><div class="r" style="left:406.20px;top:211.50px;width:0.90px;height:13.50px;background:#dedede;"></div><div class="t" style="left:31.40px;top:214.28px;font-size:9px;line-height:9px;font-weight:normal;color:#1e1e1e;transform:scaleX(0.9050);transform-origin:0 0;">A1080</div><div class="t" style="left:155.20px;top:214.28px;font-size:9px;line-height:9px;font-weight:normal;color:#1e1e1e;transform:scaleX(0.9250);transform-origin:0 0;">Install paper and shingles</div><div class="t" style="left:320.30px;top:214.28px;font-size:9px;line-height:9px;font-weight:normal;color:#1e1e1e;transform:scaleX(0.8900);transform-origin:0 0;">28-Oct-19 A</div><div class="t" style="left:410.30px;top:214.28px;font-size:9px;line-height:9px;font-weight:normal;color:#1e1e1e;transform:scaleX(0.8900);transform-origin:0 0;">27-Nov-19</div><div class="r" style="left:2.20px;top:225.00px;width:6.90px;height:13.50px;background:#f1bc8e;"></div><div class="r" style="left:9.05px;top:225.00px;width:0.60px;height:13.50px;background:#f6f6f6;"></div><div class="r" style="left:9.65px;top:225.00px;width:6.90px;height:13.50px;background:#f8de88;"></div><div class="r" style="left:16.50px;top:225.00px;width:0.60px;height:13.50px;background:#f6f6f6;"></div><div class="r" style="left:17.10px;top:225.00px;width:6.90px;height:13.50px;background:#98e2b6;"></div><div class="r" style="left:23.95px;top:225.00px;width:0.60px;height:13.50px;background:#f6f6f6;"></div><div class="r" style="left:24.55px;top:225.00px;width:414.45px;height:13.50px;background:#fff;"></div><div class="r" style="left:24.55px;top:225.00px;width:0.60px;height:13.50px;background:#eeeeee;"></div><div class="r" style="left:151.10px;top:225.00px;width:0.90px;height:13.50px;background:#dedede;"></div><div class="r" style="left:316.20px;top:225.00px;width:0.90px;height:13.50px;background:#dedede;"></div><div class="r" style="left:406.20px;top:225.00px;width:0.90px;height:13.50px;background:#dedede;"></div><div class="t" style="left:31.40px;top:227.78px;font-size:9px;line-height:9px;font-weight:normal;color:#1e1e1e;transform:scaleX(0.9050);transform-origin:0 0;">A1060</div><div class="t" style="left:155.20px;top:227.78px;font-size:9px;line-height:9px;font-weight:normal;color:#1e1e1e;transform:scaleX(0.9250);transform-origin:0 0;">Erect interior stud walls</div><div class="t" style="left:320.30px;top:227.78px;font-size:9px;line-height:9px;font-weight:normal;color:#1e1e1e;transform:scaleX(0.8900);transform-origin:0 0;">05-Nov-19 A</div><div class="t" style="left:410.30px;top:227.78px;font-size:9px;line-height:9px;font-weight:normal;color:#1e1e1e;transform:scaleX(0.8900);transform-origin:0 0;">03-Dec-19</div><div class="r" style="left:2.20px;top:238.50px;width:6.90px;height:13.50px;background:#f1bc8e;"></div><div class="r" style="left:9.05px;top:238.50px;width:0.60px;height:13.50px;background:#f6f6f6;"></div><div class="r" style="left:9.65px;top:238.50px;width:6.90px;height:13.50px;background:#f8de88;"></div><div class="r" style="left:16.50px;top:238.50px;width:0.60px;height:13.50px;background:#f6f6f6;"></div><div class="r" style="left:17.10px;top:238.50px;width:421.90px;height:13.50px;background:#98e2b6;"></div><svg class="r" style="left:18.50px;top:241.90px" width="7" height="5" viewBox="0 0 7 5"><path d="M0.7 0.8l2.8 2.9 2.8-2.9" fill="none" stroke="#111" stroke-width="1.5"/></svg><div class="t" style="left:28.10px;top:241.28px;font-size:9px;line-height:9px;font-weight:bold;color:#1a1a1a;transform:scaleX(0.8450);transform-origin:0 0;">Structure</div><div class="t" style="left:320.30px;top:241.28px;font-size:9px;line-height:9px;font-weight:bold;color:#1a1a1a;transform:scaleX(0.8850);transform-origin:0 0;">22-Oct-19</div><div class="t" style="left:410.30px;top:241.28px;font-size:9px;line-height:9px;font-weight:bold;color:#1a1a1a;transform:scaleX(0.8850);transform-origin:0 0;">26-Nov-19</div><div class="r" style="left:2.20px;top:252.00px;width:6.90px;height:13.50px;background:#f1bc8e;"></div><div class="r" style="left:9.05px;top:252.00px;width:0.60px;height:13.50px;background:#f6f6f6;"></div><div class="r" style="left:9.65px;top:252.00px;width:6.90px;height:13.50px;background:#f8de88;"></div><div class="r" style="left:16.50px;top:252.00px;width:0.60px;height:13.50px;background:#f6f6f6;"></div><div class="r" style="left:17.10px;top:252.00px;width:6.90px;height:13.50px;background:#98e2b6;"></div><div class="r" style="left:23.95px;top:252.00px;width:0.60px;height:13.50px;background:#f6f6f6;"></div><div class="r" style="left:24.55px;top:252.00px;width:414.45px;height:13.50px;background:#fff;"></div><div class="r" style="left:24.55px;top:252.00px;width:0.60px;height:13.50px;background:#eeeeee;"></div><div class="r" style="left:151.10px;top:252.00px;width:0.90px;height:13.50px;background:#dedede;"></div><div class="r" style="left:316.20px;top:252.00px;width:0.90px;height:13.50px;background:#dedede;"></div><div class="r" style="left:406.20px;top:252.00px;width:0.90px;height:13.50px;background:#dedede;"></div><div class="t" style="left:31.40px;top:254.78px;font-size:9px;line-height:9px;font-weight:normal;color:#1e1e1e;transform:scaleX(0.9050);transform-origin:0 0;">A1090</div><div class="t" style="left:155.20px;top:254.78px;font-size:9px;line-height:9px;font-weight:normal;color:#1e1e1e;transform:scaleX(0.9250);transform-origin:0 0;">Install trusses</div><div class="t" style="left:320.30px;top:254.78px;font-size:9px;line-height:9px;font-weight:normal;color:#1e1e1e;transform:scaleX(0.8900);transform-origin:0 0;">22-Oct-19 A</div><div class="t" style="left:410.30px;top:254.78px;font-size:9px;line-height:9px;font-weight:normal;color:#1e1e1e;transform:scaleX(0.8900);transform-origin:0 0;">26-Nov-19</div><div class="r" style="left:2.20px;top:265.50px;width:6.90px;height:13.50px;background:#f1bc8e;"></div><div class="r" style="left:9.05px;top:265.50px;width:0.60px;height:13.50px;background:#f6f6f6;"></div><div class="r" style="left:9.65px;top:265.50px;width:6.90px;height:13.50px;background:#f8de88;"></div><div class="r" style="left:16.50px;top:265.50px;width:0.60px;height:13.50px;background:#f6f6f6;"></div><div class="r" style="left:17.10px;top:265.50px;width:6.90px;height:13.50px;background:#98e2b6;"></div><div class="r" style="left:23.95px;top:265.50px;width:0.60px;height:13.50px;background:#f6f6f6;"></div><div class="r" style="left:24.55px;top:265.50px;width:414.45px;height:13.50px;background:#fff;"></div><div class="r" style="left:24.55px;top:265.50px;width:0.60px;height:13.50px;background:#eeeeee;"></div><div class="r" style="left:151.10px;top:265.50px;width:0.90px;height:13.50px;background:#dedede;"></div><div class="r" style="left:316.20px;top:265.50px;width:0.90px;height:13.50px;background:#dedede;"></div><div class="r" style="left:406.20px;top:265.50px;width:0.90px;height:13.50px;background:#dedede;"></div><div class="t" style="left:31.40px;top:268.28px;font-size:9px;line-height:9px;font-weight:normal;color:#1e1e1e;transform:scaleX(0.9050);transform-origin:0 0;">A1100</div><div class="t" style="left:155.20px;top:268.28px;font-size:9px;line-height:9px;font-weight:normal;color:#1e1e1e;transform:scaleX(0.9250);transform-origin:0 0;">Install roof sheeting</div><div class="t" style="left:320.30px;top:268.28px;font-size:9px;line-height:9px;font-weight:normal;color:#1e1e1e;transform:scaleX(0.8900);transform-origin:0 0;">22-Oct-19 A</div><div class="t" style="left:410.30px;top:268.28px;font-size:9px;line-height:9px;font-weight:normal;color:#1e1e1e;transform:scaleX(0.8900);transform-origin:0 0;">30-Oct-19 A</div><div class="r" style="left:2.20px;top:279.00px;width:6.90px;height:13.50px;background:#f1bc8e;"></div><div class="r" style="left:9.05px;top:279.00px;width:0.60px;height:13.50px;background:#f6f6f6;"></div><div class="r" style="left:9.65px;top:279.00px;width:6.90px;height:13.50px;background:#f8de88;"></div><div class="r" style="left:16.50px;top:279.00px;width:0.60px;height:13.50px;background:#f6f6f6;"></div><div class="r" style="left:17.10px;top:279.00px;width:421.90px;height:13.50px;background:#98e2b6;"></div><svg class="r" style="left:18.50px;top:282.40px" width="7" height="5" viewBox="0 0 7 5"><path d="M0.7 0.8l2.8 2.9 2.8-2.9" fill="none" stroke="#111" stroke-width="1.5"/></svg><div class="t" style="left:28.10px;top:281.78px;font-size:9px;line-height:9px;font-weight:bold;color:#1a1a1a;transform:scaleX(0.8450);transform-origin:0 0;">Framing</div><div class="t" style="left:320.30px;top:281.78px;font-size:9px;line-height:9px;font-weight:bold;color:#1a1a1a;transform:scaleX(0.8850);transform-origin:0 0;">04-Nov-19</div><div class="t" style="left:410.30px;top:281.78px;font-size:9px;line-height:9px;font-weight:bold;color:#1a1a1a;transform:scaleX(0.8850);transform-origin:0 0;">26-Dec-19</div><div class="r" style="left:2.20px;top:292.50px;width:6.90px;height:13.50px;background:#f1bc8e;"></div><div class="r" style="left:9.05px;top:292.50px;width:0.60px;height:13.50px;background:#f6f6f6;"></div><div class="r" style="left:9.65px;top:292.50px;width:6.90px;height:13.50px;background:#f8de88;"></div><div class="r" style="left:16.50px;top:292.50px;width:0.60px;height:13.50px;background:#f6f6f6;"></div><div class="r" style="left:17.10px;top:292.50px;width:6.90px;height:13.50px;background:#98e2b6;"></div><div class="r" style="left:23.95px;top:292.50px;width:0.60px;height:13.50px;background:#f6f6f6;"></div><div class="r" style="left:24.55px;top:292.50px;width:414.45px;height:13.50px;background:#fff;"></div><div class="r" style="left:24.55px;top:292.50px;width:0.60px;height:13.50px;background:#eeeeee;"></div><div class="r" style="left:151.10px;top:292.50px;width:0.90px;height:13.50px;background:#dedede;"></div><div class="r" style="left:316.20px;top:292.50px;width:0.90px;height:13.50px;background:#dedede;"></div><div class="r" style="left:406.20px;top:292.50px;width:0.90px;height:13.50px;background:#dedede;"></div><div class="t" style="left:31.40px;top:295.28px;font-size:9px;line-height:9px;font-weight:normal;color:#1e1e1e;transform:scaleX(0.9050);transform-origin:0 0;">A1110</div><div class="t" style="left:155.20px;top:295.28px;font-size:9px;line-height:9px;font-weight:normal;color:#1e1e1e;transform:scaleX(0.9250);transform-origin:0 0;">Install HVAC Ducting</div><div class="t" style="left:320.30px;top:295.28px;font-size:9px;line-height:9px;font-weight:normal;color:#1e1e1e;transform:scaleX(0.8900);transform-origin:0 0;">04-Nov-19 A</div><div class="t" style="left:410.30px;top:295.28px;font-size:9px;line-height:9px;font-weight:normal;color:#1e1e1e;transform:scaleX(0.8900);transform-origin:0 0;">19-Nov-19</div><div class="r" style="left:2.20px;top:306.00px;width:6.90px;height:13.50px;background:#f1bc8e;"></div><div class="r" style="left:9.05px;top:306.00px;width:0.60px;height:13.50px;background:#f6f6f6;"></div><div class="r" style="left:9.65px;top:306.00px;width:6.90px;height:13.50px;background:#f8de88;"></div><div class="r" style="left:16.50px;top:306.00px;width:0.60px;height:13.50px;background:#f6f6f6;"></div><div class="r" style="left:17.10px;top:306.00px;width:6.90px;height:13.50px;background:#98e2b6;"></div><div class="r" style="left:23.95px;top:306.00px;width:0.60px;height:13.50px;background:#f6f6f6;"></div><div class="r" style="left:24.55px;top:306.00px;width:414.45px;height:13.50px;background:#fff;"></div><div class="r" style="left:24.55px;top:306.00px;width:0.60px;height:13.50px;background:#eeeeee;"></div><div class="r" style="left:151.10px;top:306.00px;width:0.90px;height:13.50px;background:#dedede;"></div><div class="r" style="left:316.20px;top:306.00px;width:0.90px;height:13.50px;background:#dedede;"></div><div class="r" style="left:406.20px;top:306.00px;width:0.90px;height:13.50px;background:#dedede;"></div><div class="t" style="left:31.40px;top:308.78px;font-size:9px;line-height:9px;font-weight:normal;color:#1e1e1e;transform:scaleX(0.9050);transform-origin:0 0;">A1130</div><div class="t" style="left:155.20px;top:308.78px;font-size:9px;line-height:9px;font-weight:normal;color:#1e1e1e;transform:scaleX(0.9250);transform-origin:0 0;">Install breaker box and rough wire</div><div class="t" style="left:320.30px;top:308.78px;font-size:9px;line-height:9px;font-weight:normal;color:#1e1e1e;transform:scaleX(0.8900);transform-origin:0 0;">14-Nov-19</div><div class="t" style="left:410.30px;top:308.78px;font-size:9px;line-height:9px;font-weight:normal;color:#1e1e1e;transform:scaleX(0.8900);transform-origin:0 0;">27-Nov-19</div><div class="r" style="left:2.20px;top:319.50px;width:6.90px;height:13.50px;background:#f1bc8e;"></div><div class="r" style="left:9.05px;top:319.50px;width:0.60px;height:13.50px;background:#f6f6f6;"></div><div class="r" style="left:9.65px;top:319.50px;width:6.90px;height:13.50px;background:#f8de88;"></div><div class="r" style="left:16.50px;top:319.50px;width:0.60px;height:13.50px;background:#f6f6f6;"></div><div class="r" style="left:17.10px;top:319.50px;width:6.90px;height:13.50px;background:#98e2b6;"></div><div class="r" style="left:23.95px;top:319.50px;width:0.60px;height:13.50px;background:#f6f6f6;"></div><div class="r" style="left:24.55px;top:319.50px;width:414.45px;height:13.50px;background:#fff;"></div><div class="r" style="left:24.55px;top:319.50px;width:0.60px;height:13.50px;background:#eeeeee;"></div><div class="r" style="left:151.10px;top:319.50px;width:0.90px;height:13.50px;background:#dedede;"></div><div class="r" style="left:316.20px;top:319.50px;width:0.90px;height:13.50px;background:#dedede;"></div><div class="r" style="left:406.20px;top:319.50px;width:0.90px;height:13.50px;background:#dedede;"></div><div class="t" style="left:31.40px;top:322.28px;font-size:9px;line-height:9px;font-weight:normal;color:#1e1e1e;transform:scaleX(0.9050);transform-origin:0 0;">A1120</div><div class="t" style="left:155.20px;top:322.28px;font-size:9px;line-height:9px;font-weight:normal;color:#1e1e1e;transform:scaleX(0.9250);transform-origin:0 0;">Install HVAC Unit</div><div class="t" style="left:320.30px;top:322.28px;font-size:9px;line-height:9px;font-weight:normal;color:#1e1e1e;transform:scaleX(0.8900);transform-origin:0 0;">04-Dec-19</div><div class="t" style="left:410.30px;top:322.28px;font-size:9px;line-height:9px;font-weight:normal;color:#1e1e1e;transform:scaleX(0.8900);transform-origin:0 0;">24-Dec-19</div><div class="r" style="left:9.65px;top:35.45px;width:429.35px;height:1.10px;background:#e6dccf;"></div><div class="r" style="left:17.10px;top:48.95px;width:421.90px;height:1.10px;background:#d9d9d9;"></div><div class="r" style="left:17.10px;top:62.45px;width:421.90px;height:1.10px;background:#d9d9d9;"></div><div class="r" style="left:17.10px;top:75.95px;width:421.90px;height:1.10px;background:#d9d9d9;"></div><div class="r" style="left:17.10px;top:89.45px;width:421.90px;height:1.10px;background:#d9d9d9;"></div><div class="r" style="left:24.55px;top:102.95px;width:414.45px;height:1.10px;background:#d9d9d9;"></div><div class="r" style="left:24.55px;top:116.45px;width:414.45px;height:1.10px;background:#d9d9d9;"></div><div class="r" style="left:24.55px;top:129.95px;width:414.45px;height:1.10px;background:#ffffff;"></div><div class="r" style="left:24.55px;top:143.45px;width:414.45px;height:1.10px;background:#ffffff;"></div><div class="r" style="left:24.55px;top:156.95px;width:414.45px;height:1.10px;background:#d9d9d9;"></div><div class="r" style="left:24.55px;top:170.45px;width:414.45px;height:1.10px;background:#d9d9d9;"></div><div class="r" style="left:24.55px;top:183.95px;width:414.45px;height:1.10px;background:#d9d9d9;"></div><div class="r" style="left:24.55px;top:197.45px;width:414.45px;height:1.10px;background:#d9d9d9;"></div><div class="r" style="left:24.55px;top:210.95px;width:414.45px;height:1.10px;background:#d9d9d9;"></div><div class="r" style="left:24.55px;top:224.45px;width:414.45px;height:1.10px;background:#d9d9d9;"></div><div class="r" style="left:24.55px;top:237.95px;width:414.45px;height:1.10px;background:#d9d9d9;"></div><div class="r" style="left:24.55px;top:251.45px;width:414.45px;height:1.10px;background:#d9d9d9;"></div><div class="r" style="left:24.55px;top:264.95px;width:414.45px;height:1.10px;background:#d9d9d9;"></div><div class="r" style="left:24.55px;top:278.45px;width:414.45px;height:1.10px;background:#d9d9d9;"></div><div class="r" style="left:24.55px;top:291.95px;width:414.45px;height:1.10px;background:#d9d9d9;"></div><div class="r" style="left:24.55px;top:305.45px;width:414.45px;height:1.10px;background:#d9d9d9;"></div><div class="r" style="left:24.55px;top:318.95px;width:414.45px;height:1.10px;background:#d9d9d9;"></div><div class="r" style="left:24.55px;top:332.45px;width:414.45px;height:1.10px;background:#d9d9d9;"></div><div class="r" style="left:152.30px;top:130.50px;width:164.00px;height:12.90px;background:transparent;box-sizing:border-box;border:1.8px solid #d7141a"></div></div><div class="r" style="left:439.00px;top:106.80px;width:13.00px;height:325.20px;background:#f0f0f0;"></div><div class="r" style="left:439.50px;top:118.80px;width:11.00px;height:12.90px;background:#cdcdcd;"></div><svg class="r" style="left:441.50px;top:111.00px" width="8" height="5" viewBox="0 0 8 5"><path d="M1 4l3-3 3 3" fill="none" stroke="#606060" stroke-width="1.2"/></svg><svg class="r" style="left:441.50px;top:423.50px" width="8" height="5" viewBox="0 0 8 5"><path d="M1 1l3 3 3-3" fill="none" stroke="#606060" stroke-width="1.2"/></svg><div class="r" style="left:452.00px;top:103.60px;width:1.00px;height:341.20px;background:#cfcfcf;"></div><div class="r" style="left:453.00px;top:103.60px;width:2.30px;height:341.20px;background:#e2e2e2;"></div><div class="r" style="left:455.20px;top:106.80px;width:0.80px;height:325.20px;background:#c6c6c6;"></div><div class="r" style="left:0.00px;top:432.00px;width:452.00px;height:12.80px;background:#f0f0f0;"></div><div class="r" style="left:14.00px;top:432.40px;width:13.00px;height:10.80px;background:#cdcdcd;"></div><svg class="r" style="left:5.50px;top:434.50px" width="5" height="8" viewBox="0 0 5 8"><path d="M4 1L1 4l3 3" fill="none" stroke="#606060" stroke-width="1.2"/></svg><svg class="r" style="left:430.50px;top:434.50px" width="5" height="8" viewBox="0 0 5 8"><path d="M1 1l3 3-3 3" fill="none" stroke="#606060" stroke-width="1.2"/></svg><div class="r" style="left:456px;top:106.8px;width:554px;height:325.2px;background:#fff;overflow:hidden"><svg class="r" style="left:0;top:0" width="554" height="325.2" viewBox="456 106.8 554 325.2"><rect x="456" y="106.8" width="554" height="22" fill="#fff"/><path d="M456 118.2H1010M456 129.1H1010" stroke="#9c9c9c" stroke-width="0.95"/><path d="M588.6 106.8V118.2" stroke="#a8a8a8" stroke-width="0.9"/><path d="M749.1 106.8V118.2" stroke="#a8a8a8" stroke-width="0.9"/><path d="M915.2 106.8V118.2" stroke="#a8a8a8" stroke-width="0.9"/><path d="M486.69 118.2V129.1" stroke="#a8a8a8" stroke-width="0.9"/><path d="M524.18 118.2V129.1" stroke="#a8a8a8" stroke-width="0.9"/><path d="M561.67 118.2V129.1" stroke="#a8a8a8" stroke-width="0.9"/><path d="M599.16 118.2V129.1" stroke="#a8a8a8" stroke-width="0.9"/><path d="M636.65 118.2V129.1" stroke="#a8a8a8" stroke-width="0.9"/><path d="M674.14 118.2V129.1" stroke="#a8a8a8" stroke-width="0.9"/><path d="M711.63 118.2V129.1" stroke="#a8a8a8" stroke-width="0.9"/><path d="M749.12 118.2V129.1" stroke="#a8a8a8" stroke-width="0.9"/><path d="M786.61 118.2V129.1" stroke="#a8a8a8" stroke-width="0.9"/><path d="M824.10 118.2V129.1" stroke="#a8a8a8" stroke-width="0.9"/><path d="M861.59 118.2V129.1" stroke="#a8a8a8" stroke-width="0.9"/><path d="M899.08 118.2V129.1" stroke="#a8a8a8" stroke-width="0.9"/><path d="M936.57 118.2V129.1" stroke="#a8a8a8" stroke-width="0.9"/><path d="M974.06 118.2V129.1" stroke="#a8a8a8" stroke-width="0.9"/><rect x="456" y="237.30" width="554" height="12.70" fill="#3399ff"/><path d="M588.4 129.6V432" stroke="#d6d6d6" stroke-width="0.95" stroke-dasharray="2.8 1.8"/><path d="M749.4 129.6V432" stroke="#d6d6d6" stroke-width="0.95" stroke-dasharray="2.8 1.8"/><path d="M915.1 129.6V432" stroke="#d6d6d6" stroke-width="0.95" stroke-dasharray="2.8 1.8"/><path d="M456 196.35H1010" stroke="#d6d6d6" stroke-width="0.95" stroke-dasharray="2.8 1.8"/><path d="M456 263.85H1010" stroke="#d6d6d6" stroke-width="0.95" stroke-dasharray="2.8 1.8"/><path d="M456 331.35H1010" stroke="#d6d6d6" stroke-width="0.95" stroke-dasharray="2.8 1.8"/><path d="M456 398.85H1010" stroke="#d6d6d6" stroke-width="0.95" stroke-dasharray="2.8 1.8"/><rect x="536.05" y="132.25" width="350.95" height="3.8" fill="#2e3236"/><rect x="537.05" y="133.35" width="348.95" height="1.6" fill="#c4ced7"/><path d="M536.55 132.75H539.95V135.45L536.55 138.65Z" fill="#b4bec8" stroke="#1e2226" stroke-width="1" stroke-linejoin="round"/><path d="M886.50 132.75H883.10V135.45L886.50 138.65Z" fill="#b4bec8" stroke="#1e2226" stroke-width="1" stroke-linejoin="round"/><rect x="536.05" y="145.75" width="350.95" height="3.8" fill="#2e3236"/><rect x="537.05" y="146.85" width="348.95" height="1.6" fill="#c4ced7"/><path d="M536.55 146.25H539.95V148.95L536.55 152.15Z" fill="#b4bec8" stroke="#1e2226" stroke-width="1" stroke-linejoin="round"/><path d="M886.50 146.25H883.10V148.95L886.50 152.15Z" fill="#b4bec8" stroke="#1e2226" stroke-width="1" stroke-linejoin="round"/><rect x="536.3" y="161.40" width="84" height="2.4" fill="#2aa6a6" stroke="#17202a" stroke-width="0.8"/><path d="M536.3 172.8L539.1999999999999 175.70000000000002L536.3 178.60000000000002L533.4 175.70000000000002Z" fill="#aab4be" stroke="#2a2f36" stroke-width="0.85"/><path d="M876 186.3L878.9 189.20000000000002L876 192.10000000000002L873.1 189.20000000000002Z" fill="#aab4be" stroke="#2a2f36" stroke-width="0.85"/><rect x="536.00" y="199.75" width="259.10" height="3.8" fill="#2e3236"/><rect x="537.00" y="200.85" width="257.10" height="1.6" fill="#c4ced7"/><path d="M536.50 200.25H539.90V202.95L536.50 206.15Z" fill="#b4bec8" stroke="#1e2226" stroke-width="1" stroke-linejoin="round"/><path d="M794.60 200.25H791.20V202.95L794.60 206.15Z" fill="#b4bec8" stroke="#1e2226" stroke-width="1" stroke-linejoin="round"/><rect x="536.42" y="213.77" width="32.76" height="4.9" fill="#3a97e0" stroke="#17202a" stroke-width="0.85"/><rect x="573.92" y="227.27" width="45.36" height="4.9" fill="#3a97e0" stroke="#17202a" stroke-width="0.85"/><rect x="621.82" y="227.27" width="38.76" height="4.9" fill="#1fbf97" stroke="#17202a" stroke-width="0.85"/><rect x="616.42" y="240.77" width="3.16" height="4.9" fill="#3a97e0" stroke="#17202a" stroke-width="0.85"/><rect x="665.62" y="240.77" width="59.56" height="4.9" fill="#1fbf97" stroke="#17202a" stroke-width="0.85"/><rect x="616.42" y="254.27" width="3.16" height="4.9" fill="#3a97e0" stroke="#17202a" stroke-width="0.85"/><rect x="665.62" y="254.27" width="64.96" height="4.9" fill="#1fbf97" stroke="#17202a" stroke-width="0.85"/><rect x="734.42" y="267.77" width="59.36" height="4.9" fill="#1fbf97" stroke="#17202a" stroke-width="0.85"/><rect x="536.20" y="280.75" width="227.00" height="3.8" fill="#2e3236"/><rect x="537.20" y="281.85" width="225.00" height="1.6" fill="#c4ced7"/><path d="M536.70 281.25H540.10V283.95L536.70 287.15Z" fill="#b4bec8" stroke="#1e2226" stroke-width="1" stroke-linejoin="round"/><path d="M762.70 281.25H759.30V283.95L762.70 287.15Z" fill="#b4bec8" stroke="#1e2226" stroke-width="1" stroke-linejoin="round"/><rect x="536.62" y="294.77" width="82.46" height="4.9" fill="#3a97e0" stroke="#17202a" stroke-width="0.85"/><rect x="622.32" y="294.77" width="70.66" height="4.9" fill="#1fbf97" stroke="#17202a" stroke-width="0.85"/><rect x="536.62" y="308.27" width="82.46" height="4.9" fill="#3a97e0" stroke="#17202a" stroke-width="0.85"/><rect x="622.32" y="308.27" width="28.06" height="4.9" fill="#1fbf97" stroke="#17202a" stroke-width="0.85"/><rect x="568.52" y="321.77" width="50.56" height="4.9" fill="#3a97e0" stroke="#17202a" stroke-width="0.85"/><rect x="654.32" y="321.77" width="76.16" height="4.9" fill="#1fbf97" stroke="#17202a" stroke-width="0.85"/><rect x="611.72" y="335.27" width="7.36" height="4.9" fill="#3a97e0" stroke="#17202a" stroke-width="0.85"/><rect x="697.02" y="335.27" width="65.76" height="4.9" fill="#1fbf97" stroke="#17202a" stroke-width="0.85"/><rect x="536.20" y="348.25" width="189.80" height="3.8" fill="#2e3236"/><rect x="537.20" y="349.35" width="187.80" height="1.6" fill="#c4ced7"/><path d="M536.70 348.75H540.10V351.45L536.70 354.65Z" fill="#b4bec8" stroke="#1e2226" stroke-width="1" stroke-linejoin="round"/><path d="M725.50 348.75H722.10V351.45L725.50 354.65Z" fill="#b4bec8" stroke="#1e2226" stroke-width="1" stroke-linejoin="round"/><rect x="536.47" y="362.27" width="82.61" height="4.9" fill="#3a97e0" stroke="#17202a" stroke-width="0.85"/><rect x="622.12" y="362.27" width="102.56" height="4.9" fill="#1fbf97" stroke="#17202a" stroke-width="0.85"/><rect x="536.47" y="375.77" width="43.61" height="4.9" fill="#3a97e0" stroke="#17202a" stroke-width="0.85"/><rect x="605.80" y="388.75" width="280.80" height="3.8" fill="#2e3236"/><rect x="606.80" y="389.85" width="278.80" height="1.6" fill="#c4ced7"/><path d="M606.30 389.25H609.70V391.95L606.30 395.15Z" fill="#b4bec8" stroke="#1e2226" stroke-width="1" stroke-linejoin="round"/><path d="M886.10 389.25H882.70V391.95L886.10 395.15Z" fill="#b4bec8" stroke="#1e2226" stroke-width="1" stroke-linejoin="round"/><rect x="606.22" y="402.77" width="12.86" height="4.9" fill="#3a97e0" stroke="#17202a" stroke-width="0.85"/><rect x="622.12" y="402.77" width="65.06" height="4.9" fill="#e9503d" stroke="#17202a" stroke-width="0.85"/><rect x="659.72" y="416.27" width="70.46" height="4.9" fill="#e9503d" stroke="#17202a" stroke-width="0.85"/><rect x="765.92" y="429.77" width="109.16" height="4.9" fill="#e9503d" stroke="#17202a" stroke-width="0.85"/><path d="M620.5 129.6V432" stroke="#3399ff" stroke-width="1.1"/><path d="M527.30 162.30 L527.30 216.30" fill="none" stroke="#3a3a3a" stroke-width="0.95"/><path d="M527.30 162.30 L531.00 162.30" fill="none" stroke="#3a3a3a" stroke-width="0.95"/><path d="M535.60 162.30L530.60 159.80V164.80Z" fill="#262626"/><path d="M527.30 175.80 L533.50 175.80" fill="none" stroke="#3a3a3a" stroke-width="0.95"/><path d="M536.30 178.70 L536.30 183.40 L527.30 183.40" fill="none" stroke="#3a3a3a" stroke-width="0.95"/><path d="M527.30 216.30 L531.00 216.30" fill="none" stroke="#3a3a3a" stroke-width="0.95"/><path d="M535.80 216.30L530.80 213.80V218.80Z" fill="#262626"/><path d="M569.60 214.00 L571.20 214.00 L571.20 223.30 L565.20 223.30 L565.20 229.80 L569.00 229.80" fill="none" stroke="#3a3a3a" stroke-width="0.95"/><path d="M573.30 229.80L568.30 227.30V232.30Z" fill="#262626"/><path d="M661.00 229.80 L662.50 229.80 L662.50 237.20 L607.50 237.20 L607.50 256.80 L612.00 256.80" fill="none" stroke="#3a3a3a" stroke-width="0.95"/><path d="M607.50 243.30 L612.00 243.30" fill="none" stroke="#3a3a3a" stroke-width="0.95"/><path d="M615.80 243.30L610.80 240.80V245.80Z" fill="#262626"/><path d="M615.80 256.80L610.80 254.30V259.30Z" fill="#262626"/><path d="M731.00 256.80 L732.30 256.80 L732.30 264.20 L725.60 264.20 L725.60 270.30 L730.00 270.30" fill="none" stroke="#3a3a3a" stroke-width="0.95"/><path d="M733.80 270.30L728.80 267.80V272.80Z" fill="#262626"/><path d="M693.40 297.30 L694.80 297.30 L694.80 304.20 L602.50 304.20 L602.50 337.80 L607.00 337.80" fill="none" stroke="#3a3a3a" stroke-width="0.95"/><path d="M611.10 337.80L606.10 335.30V340.30Z" fill="#262626"/><path d="M650.80 310.80 L652.00 310.80 L652.00 317.20 L559.30 317.20 L559.30 324.30 L564.00 324.30" fill="none" stroke="#8a8a8a" stroke-width="1.0"/><path d="M567.90 324.30L562.90 321.80V326.80Z" fill="#262626"/><path d="M730.90 324.30 L732.00 324.30 L732.00 331.20 L725.20 331.20 L725.20 432.00" fill="none" stroke="#3a3a3a" stroke-width="0.95"/><path d="M725.10 364.80 L726.30 364.80 L726.30 371.80 L719.80 371.80 L719.80 432.00" fill="none" stroke="#a8a8a8" stroke-width="1.7"/><path d="M536.00 364.80 L527.50 364.80 L527.50 378.30 L531.00 378.30" fill="none" stroke="#3a3a3a" stroke-width="0.95"/><path d="M535.80 378.30L530.80 375.80V380.80Z" fill="#262626"/><path d="M687.60 405.30 L688.60 405.30 L688.60 412.50 L682.40 412.50 L682.40 432.00" fill="none" stroke="#d81b1b" stroke-width="0.95"/><path d="M875.50 429.00 L875.50 424.60 L866.60 424.60 L866.60 189.30 L870.00 189.30" fill="none" stroke="#666666" stroke-width="1.0"/><path d="M873.30 189.30L868.30 186.80V191.80Z" fill="#262626"/></svg><div class="t" style="left:20.99px;top:2.28px;font-size:9px;line-height:9px;font-weight:bold;color:#1a1a1a;transform:scaleX(0.8650);transform-origin:50% 0;">October 2019</div><div class="t" style="left:179.63px;top:2.28px;font-size:9px;line-height:9px;font-weight:bold;color:#1a1a1a;transform:scaleX(0.8650);transform-origin:50% 0;">November 2019</div><div class="t" style="left:343.08px;top:2.28px;font-size:9px;line-height:9px;font-weight:bold;color:#1a1a1a;transform:scaleX(0.8650);transform-origin:50% 0;">December 2019</div><div class="t" style="left:513.78px;top:2.28px;font-size:9px;line-height:9px;font-weight:bold;color:#1a1a1a;transform:scaleX(0.8650);transform-origin:50% 0;">January 2020</div><div class="t" style="left:6.94px;top:13.28px;font-size:9px;line-height:9px;font-weight:bold;color:#1a1a1a;transform:scaleX(0.8700);transform-origin:50% 0;">06</div><div class="t" style="left:44.43px;top:13.28px;font-size:9px;line-height:9px;font-weight:bold;color:#1a1a1a;transform:scaleX(0.8700);transform-origin:50% 0;">13</div><div class="t" style="left:81.92px;top:13.28px;font-size:9px;line-height:9px;font-weight:bold;color:#1a1a1a;transform:scaleX(0.8700);transform-origin:50% 0;">20</div><div class="t" style="left:119.41px;top:13.28px;font-size:9px;line-height:9px;font-weight:bold;color:#1a1a1a;transform:scaleX(0.8700);transform-origin:50% 0;">27</div><div class="t" style="left:156.90px;top:13.28px;font-size:9px;line-height:9px;font-weight:bold;color:#1a1a1a;transform:scaleX(0.8700);transform-origin:50% 0;">03</div><div class="t" style="left:194.39px;top:13.28px;font-size:9px;line-height:9px;font-weight:bold;color:#1a1a1a;transform:scaleX(0.8700);transform-origin:50% 0;">10</div><div class="t" style="left:231.88px;top:13.28px;font-size:9px;line-height:9px;font-weight:bold;color:#1a1a1a;transform:scaleX(0.8700);transform-origin:50% 0;">17</div><div class="t" style="left:269.37px;top:13.28px;font-size:9px;line-height:9px;font-weight:bold;color:#1a1a1a;transform:scaleX(0.8700);transform-origin:50% 0;">24</div><div class="t" style="left:306.86px;top:13.28px;font-size:9px;line-height:9px;font-weight:bold;color:#1a1a1a;transform:scaleX(0.8700);transform-origin:50% 0;">01</div><div class="t" style="left:344.35px;top:13.28px;font-size:9px;line-height:9px;font-weight:bold;color:#1a1a1a;transform:scaleX(0.8700);transform-origin:50% 0;">08</div><div class="t" style="left:381.84px;top:13.28px;font-size:9px;line-height:9px;font-weight:bold;color:#1a1a1a;transform:scaleX(0.8700);transform-origin:50% 0;">15</div><div class="t" style="left:419.33px;top:13.28px;font-size:9px;line-height:9px;font-weight:bold;color:#1a1a1a;transform:scaleX(0.8700);transform-origin:50% 0;">22</div><div class="t" style="left:456.82px;top:13.28px;font-size:9px;line-height:9px;font-weight:bold;color:#1a1a1a;transform:scaleX(0.8700);transform-origin:50% 0;">29</div><div class="t" style="left:494.31px;top:13.28px;font-size:9px;line-height:9px;font-weight:bold;color:#1a1a1a;transform:scaleX(0.8700);transform-origin:50% 0;">05</div><div class="t" style="left:531.80px;top:13.28px;font-size:9px;line-height:9px;font-weight:bold;color:#1a1a1a;transform:scaleX(0.8700);transform-origin:50% 0;">12</div><div class="t" style="left:437.60px;top:22.38px;font-size:9px;line-height:9px;font-weight:normal;color:#1e1e1e;transform:scaleX(0.8850);transform-origin:0 0;">26-Dec-19</div><div class="t" style="left:437.60px;top:35.88px;font-size:9px;line-height:9px;font-weight:normal;color:#1e1e1e;transform:scaleX(0.8850);transform-origin:0 0;">26-Dec-19</div><div class="t" style="left:23.78px;top:49.38px;font-size:9px;line-height:9px;font-weight:normal;color:#1e1e1e;transform:scaleX(0.8950);transform-origin:100% 0;">22-Oct-19 A</div><div class="t" style="left:172.75px;top:49.38px;font-size:9px;line-height:9px;font-weight:normal;color:#1e1e1e;transform:scaleX(0.8850);transform-origin:0 0;">07-Nov-19</div><div class="t" style="left:88.00px;top:62.88px;font-size:9px;line-height:9px;font-weight:normal;color:#1e1e1e;transform:scaleX(0.8987);transform-origin:0 0;">Project Start</div><div class="t" style="left:427.30px;top:76.38px;font-size:9px;line-height:9px;font-weight:normal;color:#1e1e1e;transform:scaleX(0.9024);transform-origin:0 0;">Project Finish</div><div class="t" style="left:346.00px;top:89.88px;font-size:9px;line-height:9px;font-weight:normal;color:#1e1e1e;transform:scaleX(0.8850);transform-origin:0 0;">09-Dec-19</div><div class="t" style="left:23.78px;top:103.38px;font-size:9px;line-height:9px;font-weight:normal;color:#1e1e1e;transform:scaleX(0.8950);transform-origin:100% 0;">22-Oct-19 A</div><div class="t" style="left:121.50px;top:103.38px;font-size:9px;line-height:9px;font-weight:normal;color:#1e1e1e;transform:scaleX(0.8850);transform-origin:0 0;">28-Oct-19 A</div><div class="t" style="left:172.75px;top:103.38px;font-size:9px;line-height:9px;font-weight:normal;color:#1e1e1e;transform:scaleX(0.9298);transform-origin:0 0;">Lori McNeil</div><div class="t" style="left:61.18px;top:116.88px;font-size:9px;line-height:9px;font-weight:normal;color:#1e1e1e;transform:scaleX(0.8950);transform-origin:100% 0;">29-Oct-19 A</div><div class="t" style="left:213.20px;top:116.88px;font-size:9px;line-height:9px;font-weight:normal;color:#1e1e1e;transform:scaleX(0.8850);transform-origin:0 0;">14-Nov-19</div><div class="t" style="left:258.50px;top:116.88px;font-size:9px;line-height:9px;font-weight:normal;color:#1e1e1e;transform:scaleX(0.8560);transform-origin:0 0;">Rea Johnson</div><div class="t" style="left:101.47px;top:130.38px;font-size:9px;line-height:9px;font-weight:normal;color:#ffffff;transform:scaleX(0.8950);transform-origin:100% 0;">06-Nov-19 A</div><div class="t" style="left:277.30px;top:130.38px;font-size:9px;line-height:9px;font-weight:normal;color:#ffffff;transform:scaleX(0.8850);transform-origin:0 0;">26-Nov-19</div><div class="t" style="left:323.20px;top:130.38px;font-size:9px;line-height:9px;font-weight:normal;color:#ffffff;transform:scaleX(0.8817);transform-origin:0 0;">Ben Frost</div><div class="t" style="left:101.47px;top:143.88px;font-size:9px;line-height:9px;font-weight:normal;color:#1e1e1e;transform:scaleX(0.8950);transform-origin:100% 0;">06-Nov-19 A</div><div class="t" style="left:282.70px;top:143.88px;font-size:9px;line-height:9px;font-weight:normal;color:#1e1e1e;transform:scaleX(0.8850);transform-origin:0 0;">27-Nov-19</div><div class="t" style="left:328.70px;top:143.88px;font-size:9px;line-height:9px;font-weight:normal;color:#1e1e1e;transform:scaleX(0.8649);transform-origin:0 0;">Peter Cooper</div><div class="t" style="left:227.58px;top:157.38px;font-size:9px;line-height:9px;font-weight:normal;color:#1e1e1e;transform:scaleX(0.8950);transform-origin:100% 0;">28-Nov-19</div><div class="t" style="left:346.10px;top:157.38px;font-size:9px;line-height:9px;font-weight:normal;color:#1e1e1e;transform:scaleX(0.8850);transform-origin:0 0;">09-Dec-19</div><div class="t" style="left:391.70px;top:157.38px;font-size:9px;line-height:9px;font-weight:normal;color:#1e1e1e;transform:scaleX(0.9198);transform-origin:0 0;">Michelle Peterson</div><div class="t" style="left:314.40px;top:170.88px;font-size:9px;line-height:9px;font-weight:normal;color:#1e1e1e;transform:scaleX(0.8850);transform-origin:0 0;">03-Dec-19</div><div class="t" style="left:24.28px;top:184.38px;font-size:9px;line-height:9px;font-weight:normal;color:#1e1e1e;transform:scaleX(0.8950);transform-origin:100% 0;">22-Oct-19 A</div><div class="t" style="left:245.25px;top:184.38px;font-size:9px;line-height:9px;font-weight:normal;color:#1e1e1e;transform:scaleX(0.8850);transform-origin:0 0;">20-Nov-19</div><div class="t" style="left:290.90px;top:184.38px;font-size:9px;line-height:9px;font-weight:normal;color:#1e1e1e;transform:scaleX(0.8989);transform-origin:0 0;">Wayne Prescott</div><div class="t" style="left:24.28px;top:197.88px;font-size:9px;line-height:9px;font-weight:normal;color:#1e1e1e;transform:scaleX(0.8950);transform-origin:100% 0;">22-Oct-19 A</div><div class="t" style="left:202.60px;top:197.88px;font-size:9px;line-height:9px;font-weight:normal;color:#1e1e1e;transform:scaleX(0.8850);transform-origin:0 0;">12-Nov-19</div><div class="t" style="left:247.90px;top:197.88px;font-size:9px;line-height:9px;font-weight:normal;color:#1e1e1e;transform:scaleX(0.8544);transform-origin:0 0;">Frank Chu</div><div class="t" style="left:55.98px;top:211.38px;font-size:9px;line-height:9px;font-weight:normal;color:#1e1e1e;transform:scaleX(0.8950);transform-origin:100% 0;">28-Oct-19 A</div><div class="t" style="left:282.60px;top:211.38px;font-size:9px;line-height:9px;font-weight:normal;color:#1e1e1e;transform:scaleX(0.8850);transform-origin:0 0;">27-Nov-19</div><div class="t" style="left:328.20px;top:211.38px;font-size:9px;line-height:9px;font-weight:normal;color:#1e1e1e;transform:scaleX(0.9159);transform-origin:0 0;">Gary Marshall</div><div class="t" style="left:96.57px;top:224.88px;font-size:9px;line-height:9px;font-weight:normal;color:#1e1e1e;transform:scaleX(0.8950);transform-origin:100% 0;">05-Nov-19 A</div><div class="t" style="left:314.40px;top:224.88px;font-size:9px;line-height:9px;font-weight:normal;color:#1e1e1e;transform:scaleX(0.8850);transform-origin:0 0;">03-Dec-19</div><div class="t" style="left:360.00px;top:224.88px;font-size:9px;line-height:9px;font-weight:normal;color:#1e1e1e;transform:scaleX(0.8916);transform-origin:0 0;">Judy Billings</div><div class="t" style="left:277.40px;top:238.38px;font-size:9px;line-height:9px;font-weight:normal;color:#1e1e1e;transform:scaleX(0.8850);transform-origin:0 0;">26-Nov-19</div><div class="t" style="left:23.58px;top:251.88px;font-size:9px;line-height:9px;font-weight:normal;color:#1e1e1e;transform:scaleX(0.8950);transform-origin:100% 0;">22-Oct-19 A</div><div class="t" style="left:277.40px;top:251.88px;font-size:9px;line-height:9px;font-weight:normal;color:#1e1e1e;transform:scaleX(0.8850);transform-origin:0 0;">26-Nov-19</div><div class="t" style="left:323.50px;top:251.88px;font-size:9px;line-height:9px;font-weight:normal;color:#1e1e1e;transform:scaleX(0.8737);transform-origin:0 0;">Paul Riley</div><div class="t" style="left:23.58px;top:265.38px;font-size:9px;line-height:9px;font-weight:normal;color:#1e1e1e;transform:scaleX(0.8950);transform-origin:100% 0;">22-Oct-19 A</div><div class="t" style="left:132.60px;top:265.38px;font-size:9px;line-height:9px;font-weight:normal;color:#1e1e1e;transform:scaleX(0.8850);transform-origin:0 0;">30-Oct-19 A</div><div class="t" style="left:184.60px;top:265.38px;font-size:9px;line-height:9px;font-weight:normal;color:#1e1e1e;transform:scaleX(0.8849);transform-origin:0 0;">Harry Shaw</div><div class="t" style="left:437.50px;top:278.88px;font-size:9px;line-height:9px;font-weight:normal;color:#1e1e1e;transform:scaleX(0.8850);transform-origin:0 0;">26-Dec-19</div><div class="t" style="left:91.97px;top:292.38px;font-size:9px;line-height:9px;font-weight:normal;color:#1e1e1e;transform:scaleX(0.8950);transform-origin:100% 0;">04-Nov-19 A</div><div class="t" style="left:239.90px;top:292.38px;font-size:9px;line-height:9px;font-weight:normal;color:#1e1e1e;transform:scaleX(0.8850);transform-origin:0 0;">19-Nov-19</div><div class="t" style="left:285.50px;top:292.38px;font-size:9px;line-height:9px;font-weight:normal;color:#1e1e1e;transform:scaleX(0.9029);transform-origin:0 0;">Robert Lincoln</div><div class="t" style="left:157.50px;top:305.88px;font-size:9px;line-height:9px;font-weight:normal;color:#1e1e1e;transform:scaleX(0.8850);transform-origin:0 0;">14-Nov-19</div><div class="t" style="left:282.90px;top:305.88px;font-size:9px;line-height:9px;font-weight:normal;color:#1e1e1e;transform:scaleX(0.8850);transform-origin:0 0;">27-Nov-19*</div><div class="t" style="left:332.50px;top:305.88px;font-size:9px;line-height:9px;font-weight:normal;color:#1e1e1e;transform:scaleX(0.8488);transform-origin:0 0;">Cindy Lee</div><div class="t" style="left:265.70px;top:319.38px;font-size:9px;line-height:9px;font-weight:normal;color:#1e1e1e;transform:scaleX(0.8850);transform-origin:0 0;">04-Dec-19</div><div class="t" style="left:427.40px;top:319.38px;font-size:9px;line-height:9px;font-weight:normal;color:#1e1e1e;transform:scaleX(0.8850);transform-origin:0 0;">24-Dec-19*</div><div class="t" style="left:477.00px;top:319.38px;font-size:9px;line-height:9px;font-weight:normal;color:#1e1e1e;transform:scaleX(0.9150);transform-origin:0 0;">Andrea Casey</div></div><div class="r" style="left:1010.00px;top:106.80px;width:14.00px;height:325.20px;background:#f0f0f0;"></div><div class="r" style="left:1011.00px;top:118.80px;width:11.50px;height:12.90px;background:#cdcdcd;"></div><svg class="r" style="left:1013.00px;top:111.00px" width="8" height="5" viewBox="0 0 8 5"><path d="M1 4l3-3 3 3" fill="none" stroke="#606060" stroke-width="1.2"/></svg><svg class="r" style="left:1013.00px;top:423.50px" width="8" height="5" viewBox="0 0 8 5"><path d="M1 1l3 3 3-3" fill="none" stroke="#606060" stroke-width="1.2"/></svg><div class="r" style="left:455.50px;top:432.00px;width:568.50px;height:12.80px;background:#f0f0f0;"></div><div class="r" style="left:733.00px;top:432.40px;width:13.00px;height:10.80px;background:#cdcdcd;"></div><svg class="r" style="left:460.50px;top:434.50px" width="5" height="8" viewBox="0 0 5 8"><path d="M4 1L1 4l3 3" fill="none" stroke="#606060" stroke-width="1.2"/></svg><svg class="r" style="left:1001.00px;top:434.50px" width="5" height="8" viewBox="0 0 5 8"><path d="M1 1l3 3-3 3" fill="none" stroke="#606060" stroke-width="1.2"/></svg><div class="r" style="left:0.00px;top:444.80px;width:1024.00px;height:1.00px;background:#d0d0d0;"></div><div class="r" style="left:0.00px;top:445.80px;width:1024.00px;height:3.40px;background:#e6e6e6;"></div><div class="r" style="left:0.00px;top:449.20px;width:1024.00px;height:103.80px;background:#f0f0f0;"></div><div class="r" style="left:0.00px;top:449.20px;width:1.80px;height:103.80px;background:#e2e2e2;"></div><div class="r" style="left:1.80px;top:449.20px;width:1.00px;height:103.80px;background:#a9a9a9;"></div><div class="r" style="left:189.20px;top:449.20px;width:0.90px;height:103.80px;background:#8c8c8c;"></div><div class="r" style="left:190.10px;top:449.20px;width:820.00px;height:103.80px;background:#fff;"></div><div class="r" style="left:190.10px;top:551.60px;width:834.00px;height:1.40px;background:#d6d6d6;"></div><div class="r" style="left:2.80px;top:450.10px;width:186.40px;height:17.50px;background:#3399ff;"></div><div class="r" style="left:2.80px;top:467.60px;width:186.40px;height:0.90px;background:#a8a8a8;"></div><div class="t" style="left:9.20px;top:454.78px;font-size:9px;line-height:9px;font-weight:normal;color:#fff;transform:scaleX(0.9050);transform-origin:0 0;">General</div><div class="r" style="left:2.80px;top:485.40px;width:186.40px;height:0.90px;background:#a8a8a8;"></div><div class="t" style="left:9.20px;top:472.58px;font-size:9px;line-height:9px;font-weight:normal;color:#1e1e1e;transform:scaleX(0.9050);transform-origin:0 0;">Status</div><div class="r" style="left:2.80px;top:503.20px;width:186.40px;height:0.90px;background:#a8a8a8;"></div><div class="t" style="left:9.20px;top:490.38px;font-size:9px;line-height:9px;font-weight:normal;color:#1e1e1e;transform:scaleX(0.9050);transform-origin:0 0;">Resources</div><div class="r" style="left:2.80px;top:521.00px;width:186.40px;height:0.90px;background:#a8a8a8;"></div><div class="t" style="left:9.20px;top:508.18px;font-size:9px;line-height:9px;font-weight:normal;color:#1e1e1e;transform:scaleX(0.9050);transform-origin:0 0;">Relationships</div><div class="r" style="left:2.80px;top:538.80px;width:186.40px;height:0.90px;background:#a8a8a8;"></div><div class="t" style="left:9.20px;top:525.98px;font-size:9px;line-height:9px;font-weight:normal;color:#1e1e1e;transform:scaleX(0.9050);transform-origin:0 0;">Codes</div><div class="r" style="left:2.80px;top:556.60px;width:186.40px;height:0.90px;background:#a8a8a8;"></div><div class="t" style="left:9.20px;top:543.78px;font-size:9px;line-height:9px;font-weight:normal;color:#1e1e1e;transform:scaleX(0.9050);transform-origin:0 0;">Notebook</div><div class="t" style="left:270.20px;top:454.68px;font-size:9px;line-height:9px;font-weight:normal;color:#262626;transform:scaleX(0.8900);transform-origin:100% 0;">Activity:</div><div class="t" style="left:308.80px;top:454.68px;font-size:9px;line-height:9px;font-weight:bold;color:#111;transform:scaleX(0.8450);transform-origin:0 0;">A1020</div><div class="t" style="left:505.79px;top:454.68px;font-size:9px;line-height:9px;font-weight:normal;color:#262626;transform:scaleX(0.8900);transform-origin:100% 0;">Activity Name:</div><div class="t" style="left:570.90px;top:454.68px;font-size:9px;line-height:9px;font-weight:bold;color:#111;transform:scaleX(0.8450);transform-origin:0 0;">Pour and float slab concrete</div><div class="r" style="left:211.60px;top:467.30px;width:775.40px;height:1.00px;background:#dcdcdc;"></div><div class="t" style="left:248.35px;top:472.48px;font-size:9px;line-height:9px;font-weight:normal;color:#262626;transform:scaleX(0.8900);transform-origin:100% 0;">Activity Type:</div><div class="t" style="left:308.80px;top:472.48px;font-size:9px;line-height:9px;font-weight:bold;color:#111;transform:scaleX(0.8450);transform-origin:0 0;">Task Dependent</div><div class="t" style="left:242.83px;top:485.98px;font-size:9px;line-height:9px;font-weight:normal;color:#262626;transform:scaleX(0.8900);transform-origin:100% 0;">Duration Type:</div><div class="t" style="left:308.80px;top:485.98px;font-size:9px;line-height:9px;font-weight:bold;color:#111;transform:scaleX(0.8450);transform-origin:0 0;">Fixed Duration &amp; Units</div><div class="t" style="left:204.82px;top:499.48px;font-size:9px;line-height:9px;font-weight:normal;color:#262626;transform:scaleX(0.8900);transform-origin:100% 0;">Percent Complete Type:</div><div class="t" style="left:308.80px;top:499.48px;font-size:9px;line-height:9px;font-weight:bold;color:#111;transform:scaleX(0.8450);transform-origin:0 0;">Units</div><div class="t" style="left:493.27px;top:472.08px;font-size:9px;line-height:9px;font-weight:normal;color:#262626;transform:scaleX(0.8900);transform-origin:100% 0;">Activity Calendar:</div><div class="t" style="left:570.90px;top:472.08px;font-size:9px;line-height:9px;font-weight:bold;color:#111;transform:scaleX(0.8450);transform-origin:0 0;">Corporate - Standard Full Time</div><div class="t" style="left:540.30px;top:485.58px;font-size:9px;line-height:9px;font-weight:normal;color:#262626;transform:scaleX(0.8900);transform-origin:100% 0;">WBS:</div><div class="t" style="left:570.90px;top:485.58px;font-size:9px;line-height:9px;font-weight:bold;color:#111;transform:scaleX(0.8450);transform-origin:0 0;">Grading</div><div class="t" style="left:473.25px;top:499.08px;font-size:9px;line-height:9px;font-weight:normal;color:#262626;transform:scaleX(0.8900);transform-origin:100% 0;">Responsible Manager:</div><div class="t" style="left:570.90px;top:499.08px;font-size:9px;line-height:9px;font-weight:bold;color:#111;transform:scaleX(0.8450);transform-origin:0 0;">Enterprise</div><div class="t" style="left:488.78px;top:512.58px;font-size:9px;line-height:9px;font-weight:normal;color:#262626;transform:scaleX(0.8900);transform-origin:100% 0;">Primary Resource:</div><div class="t" style="left:570.90px;top:512.58px;font-size:9px;line-height:9px;font-weight:bold;color:#111;transform:scaleX(0.8450);transform-origin:0 0;">FrostB.Ben Frost</div><div class="r" style="left:1010.00px;top:449.20px;width:12.50px;height:102.40px;background:#f0f0f0;"></div><div class="r" style="left:1010.50px;top:462.00px;width:11.50px;height:13.00px;background:#cdcdcd;"></div><div class="r" style="left:1022.50px;top:449.20px;width:1.50px;height:103.80px;background:#e6e6e6;"></div><svg class="r" style="left:1012.50px;top:454.00px" width="8" height="5" viewBox="0 0 8 5"><path d="M1 4l3-3 3 3" fill="none" stroke="#606060" stroke-width="1.2"/></svg><svg class="r" style="left:1012.50px;top:543.00px" width="8" height="5" viewBox="0 0 8 5"><path d="M1 1l3 3 3-3" fill="none" stroke="#606060" stroke-width="1.2"/></svg>
</body></html>
